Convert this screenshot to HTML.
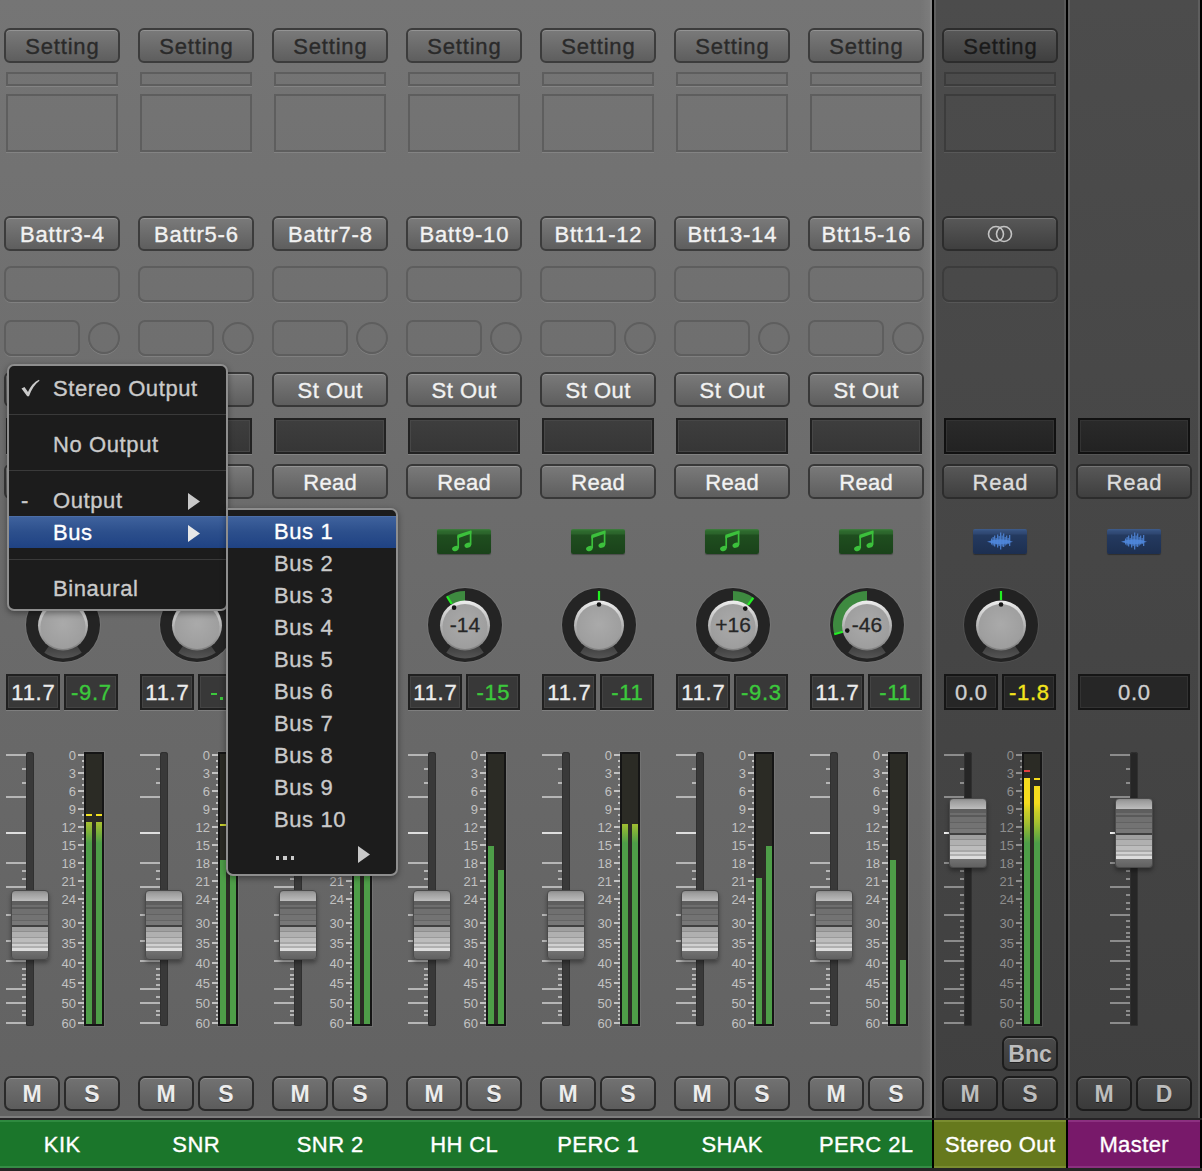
<!DOCTYPE html><html><head><meta charset="utf-8"><style>
*{margin:0;padding:0;box-sizing:border-box}
html,body{width:1202px;height:1171px;overflow:hidden;background:#737373;font-family:"Liberation Sans",sans-serif}
.btn,.vbox,.name,.mt{-webkit-text-stroke:0.35px currentColor}
.a{position:absolute}
.btn{position:absolute;border:2px solid #3c3c3c;border-radius:6px;background:linear-gradient(#7a7a7a,#5e5e5e);box-shadow:inset 0 1px 0 rgba(255,255,255,.2);text-align:center;font-size:22px;color:#f2f2f2;line-height:33px;letter-spacing:0.8px;text-indent:0.8px}
.btn.dk{color:#2a2a2a}
.btn2{border-color:#2c2c2c;background:linear-gradient(#585858,#3f3f3f);box-shadow:inset 0 1px 0 rgba(255,255,255,.18)}
.slot{position:absolute;border:2px solid #5e5e5e;box-shadow:0 1px 0 rgba(255,255,255,.12)}
.rbox{position:absolute;border:2px solid #5e5e5e;border-radius:7px;box-shadow:0 1px 0 rgba(255,255,255,.12)}
.dbox{position:absolute;border:2px solid #222;background:linear-gradient(#3e3e3e,#363636);box-shadow:inset 0 0 0 1px #474747,0 1px 0 rgba(255,255,255,.15)}
.vbox{position:absolute;border:2px solid #202020;background:#383838;box-shadow:inset 0 0 0 1px #444,0 1px 0 rgba(255,255,255,.15);text-align:center;font-size:22px;line-height:34px;color:#ececec;letter-spacing:0.7px;text-indent:0.7px}
.tick{position:absolute;height:2px;background:#b6b6b6}
.lbl{position:absolute;font-size:13px;color:#c2c2c2;text-align:right;width:24px;line-height:13px}
.dash{position:absolute;height:2px;background:#c2c2c2}
.dot{position:absolute;width:2px;height:2px;background:#c2c2c2}
.ms{position:absolute;border:2px solid #2a2a2a;border-radius:7px;background:linear-gradient(#727272,#5c5c5c);box-shadow:inset 0 1px 0 rgba(255,255,255,.2);text-align:center;font-size:23px;font-weight:bold;line-height:33px;color:#ececec;text-shadow:0 1px 0 rgba(0,0,0,.45)}
.name{position:absolute;top:1120px;height:48px;text-align:center;font-size:22px;line-height:50px;color:#fff;letter-spacing:0.4px;text-indent:0.4px}
.cap{position:absolute;width:38px;height:70px;border-radius:4px;border:1px solid #4a4a4a;box-shadow:0 3px 4px rgba(0,0,0,.35);
background:linear-gradient(180deg,#8a8a8a 0,#9c9c9c 2px,#bdbdbd 10px,#5e5e5e 10.5px,#5e5e5e 14px,#6e6e6e 14px,#6e6e6e 16px,#5a5a5a 16px,#5a5a5a 18px,#707070 18px,#707070 23px,#626262 23px,#626262 24.5px,#737373 24.5px,#737373 29px,#666 29px,#666 30.5px,#787878 30.5px,#787878 34.5px,#404040 34.5px,#404040 36px,#a0a0a0 36px,#a0a0a0 40px,#8e8e8e 40px,#8e8e8e 41.5px,#b0b0b0 41.5px,#b0b0b0 46px,#9a9a9a 46px,#9a9a9a 47.5px,#bcbcbc 47.5px,#bcbcbc 51.5px,#a8a8a8 51.5px,#a8a8a8 53.5px,#d0d0d0 53.5px,#d0d0d0 55.5px,#b0b0b0 55.5px,#b0b0b0 57px,#dcdcdc 57px,#dcdcdc 60px,#727272 60px,#5c5c5c 70px)}
.track{position:absolute;width:8px;border-radius:3px 3px 2px 2px;background:#393939;box-shadow:inset 0 0 0 1px #303030}
.meter{position:absolute;width:20px;background:#2b2b25;border:2px solid #151515;box-shadow:0 0 0 1px rgba(255,255,255,.08)}
.bar{position:absolute;width:6px;background:linear-gradient(180deg,#f6dc1e 0,#f6dc1e 49px,#c8cc28 58px,#a8c030 68px,#7cb03a 78px,#4e9e48 89px,#4e9e48 100%)}
</style></head><body><div class="a" style="left:0;top:0;width:932px;height:1171px;background:linear-gradient(#757575 0,#6b6b6b 570px,#626262 1116px)"></div>
<div class="a" style="left:920px;top:0;width:10px;height:1116px;background:linear-gradient(90deg,rgba(255,255,255,0),rgba(255,255,255,.05))"></div>
<div class="a" style="left:932px;top:0;width:136px;height:1171px;background:linear-gradient(#4c4c4c,#404040 1116px)"></div>
<div class="a" style="left:1068px;top:0;width:134px;height:1171px;background:linear-gradient(#4c4c4c,#404040 1116px)"></div>
<div class="a" style="left:930px;top:0;width:2px;height:1171px;background:rgba(255,255,255,.13)"></div>
<div class="a" style="left:932px;top:0;width:2px;height:1171px;background:#000"></div>
<div class="a" style="left:934px;top:0;width:2px;height:1171px;background:rgba(255,255,255,.11)"></div>
<div class="a" style="left:1064px;top:0;width:2px;height:1171px;background:rgba(255,255,255,.07)"></div>
<div class="a" style="left:1066px;top:0;width:2px;height:1171px;background:#000"></div>
<div class="a" style="left:1068px;top:0;width:2px;height:1171px;background:rgba(255,255,255,.11)"></div>
<div class="a" style="left:1198px;top:0;width:2px;height:1171px;background:rgba(255,255,255,.1)"></div>
<div class="a" style="left:1200px;top:0;width:2px;height:1171px;background:#000"></div>
<div class="btn dk" style="left:4px;top:28px;width:116px;height:35px;">Setting</div>
<div class="slot" style="left:6px;top:72px;width:112px;height:14px"></div>
<div class="slot" style="left:6px;top:94px;width:112px;height:58px"></div>
<div class="btn" style="left:4px;top:216px;width:116px;height:35px;">Battr3-4</div>
<div class="rbox" style="left:4px;top:266px;width:116px;height:36px"></div>
<div class="rbox" style="left:4px;top:320px;width:76px;height:36px"></div>
<div class="rbox" style="left:88px;top:322px;width:32px;height:32px;border-radius:50%"></div>
<div class="btn" style="left:4px;top:372px;width:116px;height:35px;border-color:#383838;letter-spacing:0.5px;text-indent:0.5px"></div>
<div class="dbox" style="left:6px;top:418px;width:112px;height:36px"></div>
<div class="btn" style="left:4px;top:464px;width:116px;height:35px;border-color:#383838;letter-spacing:0.3px;text-indent:0.3px"></div>
<div class="a" style="left:35px;top:529px;width:54px;height:25px;background:linear-gradient(#3e7e3e 0,#2e6a2e 2px,#2a622a 5px,#1f4e1f 6px,#1a421a 100%);border-radius:2px;box-shadow:0 1px 1px rgba(0,0,0,.3)"></div>
<svg class="a" style="left:35px;top:529px" width="54" height="25" viewBox="0 0 54 25"><path d="M21.2,6.8 L21.2,19" stroke="#3cc03c" stroke-width="1.7"/><path d="M33.6,2 L33.6,15.8" stroke="#3cc03c" stroke-width="1.7"/><path d="M20.4,5.8 L34.4,1.2 L34.4,4.6 L20.4,9.4 Z" fill="#3cc03c"/><ellipse cx="18.4" cy="19.6" rx="3.4" ry="2.5" transform="rotate(-22 18.4 19.6)" fill="#3cc03c"/><ellipse cx="30.8" cy="16.2" rx="3.4" ry="2.5" transform="rotate(-22 30.8 16.2)" fill="#3cc03c"/></svg>
<svg class="a" style="left:23px;top:585px" width="80" height="80" viewBox="0 0 80 80"><defs><linearGradient id="kf" x1="0" y1="0" x2="0" y2="1"><stop offset="0" stop-color="#eeeeee"/><stop offset="0.5" stop-color="#b4b4b4"/><stop offset="1" stop-color="#7c7c7c"/></linearGradient><radialGradient id="ki" cx="0.5" cy="0.45" r="0.6"><stop offset="0" stop-color="#aaaaaa"/><stop offset="1" stop-color="#9c9c9c"/></radialGradient><linearGradient id="kw" x1="0" y1="0" x2="0" y2="1"><stop offset="0" stop-color="#3c3c3c"/><stop offset="1" stop-color="#555"/></linearGradient></defs><circle cx="40" cy="40" r="38" fill="rgba(255,255,255,0.07)"/><circle cx="40" cy="40" r="37" fill="#242424"/><path d="M58.73,67.77 A33.5,33.5 0 0 1 21.27,67.77 L26.58,59.90 A24,24 0 0 0 53.42,59.90 Z" fill="url(#kw)"/><line x1="40.00" y1="15.00" x2="40.00" y2="6.00" stroke="#22ee22" stroke-width="2.2"/><circle cx="40" cy="40.5" r="25" fill="url(#kf)"/><circle cx="40" cy="41.5" r="22.5" fill="url(#ki)"/><circle cx="40.00" cy="19.50" r="2.3" fill="#151515"/></svg>
<div class="vbox" style="left:6px;top:674px;width:54px;height:36px">11.7</div>
<div class="vbox" style="left:64px;top:674px;width:54px;height:36px;color:#3cc83c">-9.7</div>
<div class="track" style="left:26px;top:752px;height:274px;background:#393939"></div>
<div class="tick" style="left:6px;top:754px;width:20px;background:#b6b6b6"></div>
<div class="tick" style="left:6px;top:796px;width:20px;background:#b6b6b6"></div>
<div class="tick" style="left:6px;top:832px;width:20px;background:#dedede"></div>
<div class="tick" style="left:6px;top:862px;width:20px;background:#b6b6b6"></div>
<div class="tick" style="left:6px;top:886px;width:20px;background:#b6b6b6"></div>
<div class="tick" style="left:6px;top:914px;width:20px;background:#b6b6b6"></div>
<div class="tick" style="left:6px;top:940px;width:20px;background:#b6b6b6"></div>
<div class="tick" style="left:6px;top:960px;width:20px;background:#b6b6b6"></div>
<div class="tick" style="left:6px;top:988px;width:20px;background:#b6b6b6"></div>
<div class="tick" style="left:6px;top:1002px;width:20px;background:#b6b6b6"></div>
<div class="tick" style="left:6px;top:1022px;width:20px;background:#b6b6b6"></div>
<div class="tick" style="left:22px;top:768px;width:4px;background:#b6b6b6"></div>
<div class="tick" style="left:22px;top:782px;width:4px;background:#b6b6b6"></div>
<div class="tick" style="left:22px;top:870px;width:4px;background:#b6b6b6"></div>
<div class="tick" style="left:22px;top:878px;width:4px;background:#b6b6b6"></div>
<div class="tick" style="left:22px;top:894px;width:4px;background:#b6b6b6"></div>
<div class="tick" style="left:22px;top:902px;width:4px;background:#b6b6b6"></div>
<div class="tick" style="left:22px;top:908px;width:4px;background:#b6b6b6"></div>
<div class="tick" style="left:22px;top:920px;width:4px;background:#b6b6b6"></div>
<div class="tick" style="left:22px;top:926px;width:4px;background:#b6b6b6"></div>
<div class="tick" style="left:22px;top:932px;width:4px;background:#b6b6b6"></div>
<div class="tick" style="left:22px;top:936px;width:4px;background:#b6b6b6"></div>
<div class="tick" style="left:22px;top:946px;width:4px;background:#b6b6b6"></div>
<div class="tick" style="left:22px;top:950px;width:4px;background:#b6b6b6"></div>
<div class="tick" style="left:22px;top:954px;width:4px;background:#b6b6b6"></div>
<div class="tick" style="left:22px;top:968px;width:4px;background:#b6b6b6"></div>
<div class="tick" style="left:22px;top:974px;width:4px;background:#b6b6b6"></div>
<div class="tick" style="left:22px;top:978px;width:4px;background:#b6b6b6"></div>
<div class="tick" style="left:22px;top:984px;width:4px;background:#b6b6b6"></div>
<div class="tick" style="left:22px;top:996px;width:4px;background:#b6b6b6"></div>
<div class="tick" style="left:22px;top:1010px;width:4px;background:#b6b6b6"></div>
<div class="tick" style="left:22px;top:1014px;width:4px;background:#b6b6b6"></div>
<div class="cap" style="left:11px;top:890px"></div>
<div class="lbl" style="left:52px;top:748.5px;color:#c2c2c2">0</div>
<div class="dash" style="left:78px;top:754px;width:6px;background:#c2c2c2"></div>
<div class="lbl" style="left:52px;top:766.5px;color:#c2c2c2">3</div>
<div class="dash" style="left:78px;top:772px;width:6px;background:#c2c2c2"></div>
<div class="lbl" style="left:52px;top:784.5px;color:#c2c2c2">6</div>
<div class="dash" style="left:78px;top:790px;width:6px;background:#c2c2c2"></div>
<div class="lbl" style="left:52px;top:802.5px;color:#c2c2c2">9</div>
<div class="dash" style="left:78px;top:808px;width:6px;background:#c2c2c2"></div>
<div class="lbl" style="left:52px;top:820.5px;color:#c2c2c2">12</div>
<div class="dash" style="left:78px;top:826px;width:6px;background:#c2c2c2"></div>
<div class="lbl" style="left:52px;top:838.5px;color:#c2c2c2">15</div>
<div class="dash" style="left:78px;top:844px;width:6px;background:#c2c2c2"></div>
<div class="lbl" style="left:52px;top:856.5px;color:#c2c2c2">18</div>
<div class="dash" style="left:78px;top:862px;width:6px;background:#c2c2c2"></div>
<div class="lbl" style="left:52px;top:874.5px;color:#c2c2c2">21</div>
<div class="dash" style="left:78px;top:880px;width:6px;background:#c2c2c2"></div>
<div class="lbl" style="left:52px;top:892.5px;color:#c2c2c2">24</div>
<div class="dash" style="left:78px;top:898px;width:6px;background:#c2c2c2"></div>
<div class="lbl" style="left:52px;top:916.5px;color:#c2c2c2">30</div>
<div class="dash" style="left:78px;top:922px;width:6px;background:#c2c2c2"></div>
<div class="lbl" style="left:52px;top:936.5px;color:#c2c2c2">35</div>
<div class="dash" style="left:78px;top:942px;width:6px;background:#c2c2c2"></div>
<div class="lbl" style="left:52px;top:956.5px;color:#c2c2c2">40</div>
<div class="dash" style="left:78px;top:962px;width:6px;background:#c2c2c2"></div>
<div class="lbl" style="left:52px;top:976.5px;color:#c2c2c2">45</div>
<div class="dash" style="left:78px;top:982px;width:6px;background:#c2c2c2"></div>
<div class="lbl" style="left:52px;top:996.5px;color:#c2c2c2">50</div>
<div class="dash" style="left:78px;top:1002px;width:6px;background:#c2c2c2"></div>
<div class="lbl" style="left:52px;top:1016.5px;color:#c2c2c2">60</div>
<div class="dash" style="left:78px;top:1022px;width:6px;background:#c2c2c2"></div>
<div class="dot" style="left:82px;top:760px;background:#c2c2c2"></div>
<div class="dot" style="left:82px;top:766px;background:#c2c2c2"></div>
<div class="dot" style="left:82px;top:778px;background:#c2c2c2"></div>
<div class="dot" style="left:82px;top:784px;background:#c2c2c2"></div>
<div class="dot" style="left:82px;top:796px;background:#c2c2c2"></div>
<div class="dot" style="left:82px;top:802px;background:#c2c2c2"></div>
<div class="dot" style="left:82px;top:814px;background:#c2c2c2"></div>
<div class="dot" style="left:82px;top:820px;background:#c2c2c2"></div>
<div class="dot" style="left:82px;top:832px;background:#c2c2c2"></div>
<div class="dot" style="left:82px;top:838px;background:#c2c2c2"></div>
<div class="dot" style="left:82px;top:850px;background:#c2c2c2"></div>
<div class="dot" style="left:82px;top:856px;background:#c2c2c2"></div>
<div class="dot" style="left:82px;top:868px;background:#c2c2c2"></div>
<div class="dot" style="left:82px;top:874px;background:#c2c2c2"></div>
<div class="dot" style="left:82px;top:886px;background:#c2c2c2"></div>
<div class="dot" style="left:82px;top:892px;background:#c2c2c2"></div>
<div class="dot" style="left:82px;top:902px;background:#c2c2c2"></div>
<div class="dot" style="left:82px;top:906px;background:#c2c2c2"></div>
<div class="dot" style="left:82px;top:910px;background:#c2c2c2"></div>
<div class="dot" style="left:82px;top:914px;background:#c2c2c2"></div>
<div class="dot" style="left:82px;top:918px;background:#c2c2c2"></div>
<div class="dot" style="left:82px;top:926px;background:#c2c2c2"></div>
<div class="dot" style="left:82px;top:930px;background:#c2c2c2"></div>
<div class="dot" style="left:82px;top:934px;background:#c2c2c2"></div>
<div class="dot" style="left:82px;top:938px;background:#c2c2c2"></div>
<div class="dot" style="left:82px;top:946px;background:#c2c2c2"></div>
<div class="dot" style="left:82px;top:950px;background:#c2c2c2"></div>
<div class="dot" style="left:82px;top:954px;background:#c2c2c2"></div>
<div class="dot" style="left:82px;top:958px;background:#c2c2c2"></div>
<div class="dot" style="left:82px;top:966px;background:#c2c2c2"></div>
<div class="dot" style="left:82px;top:970px;background:#c2c2c2"></div>
<div class="dot" style="left:82px;top:974px;background:#c2c2c2"></div>
<div class="dot" style="left:82px;top:978px;background:#c2c2c2"></div>
<div class="dot" style="left:82px;top:986px;background:#c2c2c2"></div>
<div class="dot" style="left:82px;top:990px;background:#c2c2c2"></div>
<div class="dot" style="left:82px;top:994px;background:#c2c2c2"></div>
<div class="dot" style="left:82px;top:998px;background:#c2c2c2"></div>
<div class="dot" style="left:82px;top:1006px;background:#c2c2c2"></div>
<div class="dot" style="left:82px;top:1010px;background:#c2c2c2"></div>
<div class="dot" style="left:82px;top:1014px;background:#c2c2c2"></div>
<div class="dot" style="left:82px;top:1018px;background:#c2c2c2"></div>
<div class="meter" style="left:84px;top:752px;height:274px">
<div class="bar" style="left:0px;top:68px;height:202px;background-position:0 -68px;background-size:6px 270px"></div>
<div class="a" style="left:0px;top:60px;width:6px;height:2px;background:#f0e020"></div>
<div class="bar" style="left:10px;top:68px;height:202px;background-position:0 -68px;background-size:6px 270px"></div>
<div class="a" style="left:10px;top:60px;width:6px;height:2px;background:#f0e020"></div>
</div>
<div class="ms" style="left:4px;top:1076px;width:56px;height:35px;">M</div>
<div class="ms" style="left:64px;top:1076px;width:56px;height:35px;">S</div>
<div class="btn dk" style="left:138px;top:28px;width:116px;height:35px;">Setting</div>
<div class="slot" style="left:140px;top:72px;width:112px;height:14px"></div>
<div class="slot" style="left:140px;top:94px;width:112px;height:58px"></div>
<div class="btn" style="left:138px;top:216px;width:116px;height:35px;">Battr5-6</div>
<div class="rbox" style="left:138px;top:266px;width:116px;height:36px"></div>
<div class="rbox" style="left:138px;top:320px;width:76px;height:36px"></div>
<div class="rbox" style="left:222px;top:322px;width:32px;height:32px;border-radius:50%"></div>
<div class="btn" style="left:138px;top:372px;width:116px;height:35px;border-color:#383838;letter-spacing:0.5px;text-indent:0.5px"></div>
<div class="dbox" style="left:140px;top:418px;width:112px;height:36px"></div>
<div class="btn" style="left:138px;top:464px;width:116px;height:35px;border-color:#383838;letter-spacing:0.3px;text-indent:0.3px"></div>
<div class="a" style="left:169px;top:529px;width:54px;height:25px;background:linear-gradient(#3e7e3e 0,#2e6a2e 2px,#2a622a 5px,#1f4e1f 6px,#1a421a 100%);border-radius:2px;box-shadow:0 1px 1px rgba(0,0,0,.3)"></div>
<svg class="a" style="left:169px;top:529px" width="54" height="25" viewBox="0 0 54 25"><path d="M21.2,6.8 L21.2,19" stroke="#3cc03c" stroke-width="1.7"/><path d="M33.6,2 L33.6,15.8" stroke="#3cc03c" stroke-width="1.7"/><path d="M20.4,5.8 L34.4,1.2 L34.4,4.6 L20.4,9.4 Z" fill="#3cc03c"/><ellipse cx="18.4" cy="19.6" rx="3.4" ry="2.5" transform="rotate(-22 18.4 19.6)" fill="#3cc03c"/><ellipse cx="30.8" cy="16.2" rx="3.4" ry="2.5" transform="rotate(-22 30.8 16.2)" fill="#3cc03c"/></svg>
<svg class="a" style="left:157px;top:585px" width="80" height="80" viewBox="0 0 80 80"><defs><linearGradient id="kf" x1="0" y1="0" x2="0" y2="1"><stop offset="0" stop-color="#eeeeee"/><stop offset="0.5" stop-color="#b4b4b4"/><stop offset="1" stop-color="#7c7c7c"/></linearGradient><radialGradient id="ki" cx="0.5" cy="0.45" r="0.6"><stop offset="0" stop-color="#aaaaaa"/><stop offset="1" stop-color="#9c9c9c"/></radialGradient><linearGradient id="kw" x1="0" y1="0" x2="0" y2="1"><stop offset="0" stop-color="#3c3c3c"/><stop offset="1" stop-color="#555"/></linearGradient></defs><circle cx="40" cy="40" r="38" fill="rgba(255,255,255,0.07)"/><circle cx="40" cy="40" r="37" fill="#242424"/><path d="M58.73,67.77 A33.5,33.5 0 0 1 21.27,67.77 L26.58,59.90 A24,24 0 0 0 53.42,59.90 Z" fill="url(#kw)"/><line x1="40.00" y1="15.00" x2="40.00" y2="6.00" stroke="#22ee22" stroke-width="2.2"/><circle cx="40" cy="40.5" r="25" fill="url(#kf)"/><circle cx="40" cy="41.5" r="22.5" fill="url(#ki)"/><circle cx="40.00" cy="19.50" r="2.3" fill="#151515"/></svg>
<div class="vbox" style="left:140px;top:674px;width:54px;height:36px">11.7</div>
<div class="vbox" style="left:198px;top:674px;width:54px;height:36px;color:#3cc83c"></div>
<div class="a" style="left:210.5px;top:693px;width:6.5px;height:2.2px;background:#3cc83c"></div><div class="a" style="left:220px;top:697px;width:3.2px;height:3px;background:#3cc83c"></div>
<div class="track" style="left:160px;top:752px;height:274px;background:#393939"></div>
<div class="tick" style="left:140px;top:754px;width:20px;background:#b6b6b6"></div>
<div class="tick" style="left:140px;top:796px;width:20px;background:#b6b6b6"></div>
<div class="tick" style="left:140px;top:832px;width:20px;background:#dedede"></div>
<div class="tick" style="left:140px;top:862px;width:20px;background:#b6b6b6"></div>
<div class="tick" style="left:140px;top:886px;width:20px;background:#b6b6b6"></div>
<div class="tick" style="left:140px;top:914px;width:20px;background:#b6b6b6"></div>
<div class="tick" style="left:140px;top:940px;width:20px;background:#b6b6b6"></div>
<div class="tick" style="left:140px;top:960px;width:20px;background:#b6b6b6"></div>
<div class="tick" style="left:140px;top:988px;width:20px;background:#b6b6b6"></div>
<div class="tick" style="left:140px;top:1002px;width:20px;background:#b6b6b6"></div>
<div class="tick" style="left:140px;top:1022px;width:20px;background:#b6b6b6"></div>
<div class="tick" style="left:156px;top:768px;width:4px;background:#b6b6b6"></div>
<div class="tick" style="left:156px;top:782px;width:4px;background:#b6b6b6"></div>
<div class="tick" style="left:156px;top:870px;width:4px;background:#b6b6b6"></div>
<div class="tick" style="left:156px;top:878px;width:4px;background:#b6b6b6"></div>
<div class="tick" style="left:156px;top:894px;width:4px;background:#b6b6b6"></div>
<div class="tick" style="left:156px;top:902px;width:4px;background:#b6b6b6"></div>
<div class="tick" style="left:156px;top:908px;width:4px;background:#b6b6b6"></div>
<div class="tick" style="left:156px;top:920px;width:4px;background:#b6b6b6"></div>
<div class="tick" style="left:156px;top:926px;width:4px;background:#b6b6b6"></div>
<div class="tick" style="left:156px;top:932px;width:4px;background:#b6b6b6"></div>
<div class="tick" style="left:156px;top:936px;width:4px;background:#b6b6b6"></div>
<div class="tick" style="left:156px;top:946px;width:4px;background:#b6b6b6"></div>
<div class="tick" style="left:156px;top:950px;width:4px;background:#b6b6b6"></div>
<div class="tick" style="left:156px;top:954px;width:4px;background:#b6b6b6"></div>
<div class="tick" style="left:156px;top:968px;width:4px;background:#b6b6b6"></div>
<div class="tick" style="left:156px;top:974px;width:4px;background:#b6b6b6"></div>
<div class="tick" style="left:156px;top:978px;width:4px;background:#b6b6b6"></div>
<div class="tick" style="left:156px;top:984px;width:4px;background:#b6b6b6"></div>
<div class="tick" style="left:156px;top:996px;width:4px;background:#b6b6b6"></div>
<div class="tick" style="left:156px;top:1010px;width:4px;background:#b6b6b6"></div>
<div class="tick" style="left:156px;top:1014px;width:4px;background:#b6b6b6"></div>
<div class="cap" style="left:145px;top:890px"></div>
<div class="lbl" style="left:186px;top:748.5px;color:#c2c2c2">0</div>
<div class="dash" style="left:212px;top:754px;width:6px;background:#c2c2c2"></div>
<div class="lbl" style="left:186px;top:766.5px;color:#c2c2c2">3</div>
<div class="dash" style="left:212px;top:772px;width:6px;background:#c2c2c2"></div>
<div class="lbl" style="left:186px;top:784.5px;color:#c2c2c2">6</div>
<div class="dash" style="left:212px;top:790px;width:6px;background:#c2c2c2"></div>
<div class="lbl" style="left:186px;top:802.5px;color:#c2c2c2">9</div>
<div class="dash" style="left:212px;top:808px;width:6px;background:#c2c2c2"></div>
<div class="lbl" style="left:186px;top:820.5px;color:#c2c2c2">12</div>
<div class="dash" style="left:212px;top:826px;width:6px;background:#c2c2c2"></div>
<div class="lbl" style="left:186px;top:838.5px;color:#c2c2c2">15</div>
<div class="dash" style="left:212px;top:844px;width:6px;background:#c2c2c2"></div>
<div class="lbl" style="left:186px;top:856.5px;color:#c2c2c2">18</div>
<div class="dash" style="left:212px;top:862px;width:6px;background:#c2c2c2"></div>
<div class="lbl" style="left:186px;top:874.5px;color:#c2c2c2">21</div>
<div class="dash" style="left:212px;top:880px;width:6px;background:#c2c2c2"></div>
<div class="lbl" style="left:186px;top:892.5px;color:#c2c2c2">24</div>
<div class="dash" style="left:212px;top:898px;width:6px;background:#c2c2c2"></div>
<div class="lbl" style="left:186px;top:916.5px;color:#c2c2c2">30</div>
<div class="dash" style="left:212px;top:922px;width:6px;background:#c2c2c2"></div>
<div class="lbl" style="left:186px;top:936.5px;color:#c2c2c2">35</div>
<div class="dash" style="left:212px;top:942px;width:6px;background:#c2c2c2"></div>
<div class="lbl" style="left:186px;top:956.5px;color:#c2c2c2">40</div>
<div class="dash" style="left:212px;top:962px;width:6px;background:#c2c2c2"></div>
<div class="lbl" style="left:186px;top:976.5px;color:#c2c2c2">45</div>
<div class="dash" style="left:212px;top:982px;width:6px;background:#c2c2c2"></div>
<div class="lbl" style="left:186px;top:996.5px;color:#c2c2c2">50</div>
<div class="dash" style="left:212px;top:1002px;width:6px;background:#c2c2c2"></div>
<div class="lbl" style="left:186px;top:1016.5px;color:#c2c2c2">60</div>
<div class="dash" style="left:212px;top:1022px;width:6px;background:#c2c2c2"></div>
<div class="dot" style="left:216px;top:760px;background:#c2c2c2"></div>
<div class="dot" style="left:216px;top:766px;background:#c2c2c2"></div>
<div class="dot" style="left:216px;top:778px;background:#c2c2c2"></div>
<div class="dot" style="left:216px;top:784px;background:#c2c2c2"></div>
<div class="dot" style="left:216px;top:796px;background:#c2c2c2"></div>
<div class="dot" style="left:216px;top:802px;background:#c2c2c2"></div>
<div class="dot" style="left:216px;top:814px;background:#c2c2c2"></div>
<div class="dot" style="left:216px;top:820px;background:#c2c2c2"></div>
<div class="dot" style="left:216px;top:832px;background:#c2c2c2"></div>
<div class="dot" style="left:216px;top:838px;background:#c2c2c2"></div>
<div class="dot" style="left:216px;top:850px;background:#c2c2c2"></div>
<div class="dot" style="left:216px;top:856px;background:#c2c2c2"></div>
<div class="dot" style="left:216px;top:868px;background:#c2c2c2"></div>
<div class="dot" style="left:216px;top:874px;background:#c2c2c2"></div>
<div class="dot" style="left:216px;top:886px;background:#c2c2c2"></div>
<div class="dot" style="left:216px;top:892px;background:#c2c2c2"></div>
<div class="dot" style="left:216px;top:902px;background:#c2c2c2"></div>
<div class="dot" style="left:216px;top:906px;background:#c2c2c2"></div>
<div class="dot" style="left:216px;top:910px;background:#c2c2c2"></div>
<div class="dot" style="left:216px;top:914px;background:#c2c2c2"></div>
<div class="dot" style="left:216px;top:918px;background:#c2c2c2"></div>
<div class="dot" style="left:216px;top:926px;background:#c2c2c2"></div>
<div class="dot" style="left:216px;top:930px;background:#c2c2c2"></div>
<div class="dot" style="left:216px;top:934px;background:#c2c2c2"></div>
<div class="dot" style="left:216px;top:938px;background:#c2c2c2"></div>
<div class="dot" style="left:216px;top:946px;background:#c2c2c2"></div>
<div class="dot" style="left:216px;top:950px;background:#c2c2c2"></div>
<div class="dot" style="left:216px;top:954px;background:#c2c2c2"></div>
<div class="dot" style="left:216px;top:958px;background:#c2c2c2"></div>
<div class="dot" style="left:216px;top:966px;background:#c2c2c2"></div>
<div class="dot" style="left:216px;top:970px;background:#c2c2c2"></div>
<div class="dot" style="left:216px;top:974px;background:#c2c2c2"></div>
<div class="dot" style="left:216px;top:978px;background:#c2c2c2"></div>
<div class="dot" style="left:216px;top:986px;background:#c2c2c2"></div>
<div class="dot" style="left:216px;top:990px;background:#c2c2c2"></div>
<div class="dot" style="left:216px;top:994px;background:#c2c2c2"></div>
<div class="dot" style="left:216px;top:998px;background:#c2c2c2"></div>
<div class="dot" style="left:216px;top:1006px;background:#c2c2c2"></div>
<div class="dot" style="left:216px;top:1010px;background:#c2c2c2"></div>
<div class="dot" style="left:216px;top:1014px;background:#c2c2c2"></div>
<div class="dot" style="left:216px;top:1018px;background:#c2c2c2"></div>
<div class="meter" style="left:218px;top:752px;height:274px">
<div class="bar" style="left:0px;top:106px;height:164px;background-position:0 -106px;background-size:6px 270px"></div>
<div class="a" style="left:0px;top:70px;width:6px;height:2px;background:#c8d030"></div>
<div class="bar" style="left:10px;top:106px;height:164px;background-position:0 -106px;background-size:6px 270px"></div>
</div>
<div class="ms" style="left:138px;top:1076px;width:56px;height:35px;">M</div>
<div class="ms" style="left:198px;top:1076px;width:56px;height:35px;">S</div>
<div class="btn dk" style="left:272px;top:28px;width:116px;height:35px;">Setting</div>
<div class="slot" style="left:274px;top:72px;width:112px;height:14px"></div>
<div class="slot" style="left:274px;top:94px;width:112px;height:58px"></div>
<div class="btn" style="left:272px;top:216px;width:116px;height:35px;">Battr7-8</div>
<div class="rbox" style="left:272px;top:266px;width:116px;height:36px"></div>
<div class="rbox" style="left:272px;top:320px;width:76px;height:36px"></div>
<div class="rbox" style="left:356px;top:322px;width:32px;height:32px;border-radius:50%"></div>
<div class="btn" style="left:272px;top:372px;width:116px;height:35px;border-color:#383838;letter-spacing:0.5px;text-indent:0.5px">St Out</div>
<div class="dbox" style="left:274px;top:418px;width:112px;height:36px"></div>
<div class="btn" style="left:272px;top:464px;width:116px;height:35px;border-color:#383838;letter-spacing:0.3px;text-indent:0.3px">Read</div>
<div class="a" style="left:303px;top:529px;width:54px;height:25px;background:linear-gradient(#3e7e3e 0,#2e6a2e 2px,#2a622a 5px,#1f4e1f 6px,#1a421a 100%);border-radius:2px;box-shadow:0 1px 1px rgba(0,0,0,.3)"></div>
<svg class="a" style="left:303px;top:529px" width="54" height="25" viewBox="0 0 54 25"><path d="M21.2,6.8 L21.2,19" stroke="#3cc03c" stroke-width="1.7"/><path d="M33.6,2 L33.6,15.8" stroke="#3cc03c" stroke-width="1.7"/><path d="M20.4,5.8 L34.4,1.2 L34.4,4.6 L20.4,9.4 Z" fill="#3cc03c"/><ellipse cx="18.4" cy="19.6" rx="3.4" ry="2.5" transform="rotate(-22 18.4 19.6)" fill="#3cc03c"/><ellipse cx="30.8" cy="16.2" rx="3.4" ry="2.5" transform="rotate(-22 30.8 16.2)" fill="#3cc03c"/></svg>
<svg class="a" style="left:291px;top:585px" width="80" height="80" viewBox="0 0 80 80"><defs><linearGradient id="kf" x1="0" y1="0" x2="0" y2="1"><stop offset="0" stop-color="#eeeeee"/><stop offset="0.5" stop-color="#b4b4b4"/><stop offset="1" stop-color="#7c7c7c"/></linearGradient><radialGradient id="ki" cx="0.5" cy="0.45" r="0.6"><stop offset="0" stop-color="#aaaaaa"/><stop offset="1" stop-color="#9c9c9c"/></radialGradient><linearGradient id="kw" x1="0" y1="0" x2="0" y2="1"><stop offset="0" stop-color="#3c3c3c"/><stop offset="1" stop-color="#555"/></linearGradient></defs><circle cx="40" cy="40" r="38" fill="rgba(255,255,255,0.07)"/><circle cx="40" cy="40" r="37" fill="#242424"/><path d="M58.73,67.77 A33.5,33.5 0 0 1 21.27,67.77 L26.58,59.90 A24,24 0 0 0 53.42,59.90 Z" fill="url(#kw)"/><line x1="40.00" y1="15.00" x2="40.00" y2="6.00" stroke="#22ee22" stroke-width="2.2"/><circle cx="40" cy="40.5" r="25" fill="url(#kf)"/><circle cx="40" cy="41.5" r="22.5" fill="url(#ki)"/><circle cx="40.00" cy="19.50" r="2.3" fill="#151515"/></svg>
<div class="vbox" style="left:274px;top:674px;width:54px;height:36px">11.7</div>
<div class="vbox" style="left:332px;top:674px;width:54px;height:36px;color:#3cc83c">-11</div>
<div class="track" style="left:294px;top:752px;height:274px;background:#393939"></div>
<div class="tick" style="left:274px;top:754px;width:20px;background:#b6b6b6"></div>
<div class="tick" style="left:274px;top:796px;width:20px;background:#b6b6b6"></div>
<div class="tick" style="left:274px;top:832px;width:20px;background:#dedede"></div>
<div class="tick" style="left:274px;top:862px;width:20px;background:#b6b6b6"></div>
<div class="tick" style="left:274px;top:886px;width:20px;background:#b6b6b6"></div>
<div class="tick" style="left:274px;top:914px;width:20px;background:#b6b6b6"></div>
<div class="tick" style="left:274px;top:940px;width:20px;background:#b6b6b6"></div>
<div class="tick" style="left:274px;top:960px;width:20px;background:#b6b6b6"></div>
<div class="tick" style="left:274px;top:988px;width:20px;background:#b6b6b6"></div>
<div class="tick" style="left:274px;top:1002px;width:20px;background:#b6b6b6"></div>
<div class="tick" style="left:274px;top:1022px;width:20px;background:#b6b6b6"></div>
<div class="tick" style="left:290px;top:768px;width:4px;background:#b6b6b6"></div>
<div class="tick" style="left:290px;top:782px;width:4px;background:#b6b6b6"></div>
<div class="tick" style="left:290px;top:870px;width:4px;background:#b6b6b6"></div>
<div class="tick" style="left:290px;top:878px;width:4px;background:#b6b6b6"></div>
<div class="tick" style="left:290px;top:894px;width:4px;background:#b6b6b6"></div>
<div class="tick" style="left:290px;top:902px;width:4px;background:#b6b6b6"></div>
<div class="tick" style="left:290px;top:908px;width:4px;background:#b6b6b6"></div>
<div class="tick" style="left:290px;top:920px;width:4px;background:#b6b6b6"></div>
<div class="tick" style="left:290px;top:926px;width:4px;background:#b6b6b6"></div>
<div class="tick" style="left:290px;top:932px;width:4px;background:#b6b6b6"></div>
<div class="tick" style="left:290px;top:936px;width:4px;background:#b6b6b6"></div>
<div class="tick" style="left:290px;top:946px;width:4px;background:#b6b6b6"></div>
<div class="tick" style="left:290px;top:950px;width:4px;background:#b6b6b6"></div>
<div class="tick" style="left:290px;top:954px;width:4px;background:#b6b6b6"></div>
<div class="tick" style="left:290px;top:968px;width:4px;background:#b6b6b6"></div>
<div class="tick" style="left:290px;top:974px;width:4px;background:#b6b6b6"></div>
<div class="tick" style="left:290px;top:978px;width:4px;background:#b6b6b6"></div>
<div class="tick" style="left:290px;top:984px;width:4px;background:#b6b6b6"></div>
<div class="tick" style="left:290px;top:996px;width:4px;background:#b6b6b6"></div>
<div class="tick" style="left:290px;top:1010px;width:4px;background:#b6b6b6"></div>
<div class="tick" style="left:290px;top:1014px;width:4px;background:#b6b6b6"></div>
<div class="cap" style="left:279px;top:890px"></div>
<div class="lbl" style="left:320px;top:748.5px;color:#c2c2c2">0</div>
<div class="dash" style="left:346px;top:754px;width:6px;background:#c2c2c2"></div>
<div class="lbl" style="left:320px;top:766.5px;color:#c2c2c2">3</div>
<div class="dash" style="left:346px;top:772px;width:6px;background:#c2c2c2"></div>
<div class="lbl" style="left:320px;top:784.5px;color:#c2c2c2">6</div>
<div class="dash" style="left:346px;top:790px;width:6px;background:#c2c2c2"></div>
<div class="lbl" style="left:320px;top:802.5px;color:#c2c2c2">9</div>
<div class="dash" style="left:346px;top:808px;width:6px;background:#c2c2c2"></div>
<div class="lbl" style="left:320px;top:820.5px;color:#c2c2c2">12</div>
<div class="dash" style="left:346px;top:826px;width:6px;background:#c2c2c2"></div>
<div class="lbl" style="left:320px;top:838.5px;color:#c2c2c2">15</div>
<div class="dash" style="left:346px;top:844px;width:6px;background:#c2c2c2"></div>
<div class="lbl" style="left:320px;top:856.5px;color:#c2c2c2">18</div>
<div class="dash" style="left:346px;top:862px;width:6px;background:#c2c2c2"></div>
<div class="lbl" style="left:320px;top:874.5px;color:#c2c2c2">21</div>
<div class="dash" style="left:346px;top:880px;width:6px;background:#c2c2c2"></div>
<div class="lbl" style="left:320px;top:892.5px;color:#c2c2c2">24</div>
<div class="dash" style="left:346px;top:898px;width:6px;background:#c2c2c2"></div>
<div class="lbl" style="left:320px;top:916.5px;color:#c2c2c2">30</div>
<div class="dash" style="left:346px;top:922px;width:6px;background:#c2c2c2"></div>
<div class="lbl" style="left:320px;top:936.5px;color:#c2c2c2">35</div>
<div class="dash" style="left:346px;top:942px;width:6px;background:#c2c2c2"></div>
<div class="lbl" style="left:320px;top:956.5px;color:#c2c2c2">40</div>
<div class="dash" style="left:346px;top:962px;width:6px;background:#c2c2c2"></div>
<div class="lbl" style="left:320px;top:976.5px;color:#c2c2c2">45</div>
<div class="dash" style="left:346px;top:982px;width:6px;background:#c2c2c2"></div>
<div class="lbl" style="left:320px;top:996.5px;color:#c2c2c2">50</div>
<div class="dash" style="left:346px;top:1002px;width:6px;background:#c2c2c2"></div>
<div class="lbl" style="left:320px;top:1016.5px;color:#c2c2c2">60</div>
<div class="dash" style="left:346px;top:1022px;width:6px;background:#c2c2c2"></div>
<div class="dot" style="left:350px;top:760px;background:#c2c2c2"></div>
<div class="dot" style="left:350px;top:766px;background:#c2c2c2"></div>
<div class="dot" style="left:350px;top:778px;background:#c2c2c2"></div>
<div class="dot" style="left:350px;top:784px;background:#c2c2c2"></div>
<div class="dot" style="left:350px;top:796px;background:#c2c2c2"></div>
<div class="dot" style="left:350px;top:802px;background:#c2c2c2"></div>
<div class="dot" style="left:350px;top:814px;background:#c2c2c2"></div>
<div class="dot" style="left:350px;top:820px;background:#c2c2c2"></div>
<div class="dot" style="left:350px;top:832px;background:#c2c2c2"></div>
<div class="dot" style="left:350px;top:838px;background:#c2c2c2"></div>
<div class="dot" style="left:350px;top:850px;background:#c2c2c2"></div>
<div class="dot" style="left:350px;top:856px;background:#c2c2c2"></div>
<div class="dot" style="left:350px;top:868px;background:#c2c2c2"></div>
<div class="dot" style="left:350px;top:874px;background:#c2c2c2"></div>
<div class="dot" style="left:350px;top:886px;background:#c2c2c2"></div>
<div class="dot" style="left:350px;top:892px;background:#c2c2c2"></div>
<div class="dot" style="left:350px;top:902px;background:#c2c2c2"></div>
<div class="dot" style="left:350px;top:906px;background:#c2c2c2"></div>
<div class="dot" style="left:350px;top:910px;background:#c2c2c2"></div>
<div class="dot" style="left:350px;top:914px;background:#c2c2c2"></div>
<div class="dot" style="left:350px;top:918px;background:#c2c2c2"></div>
<div class="dot" style="left:350px;top:926px;background:#c2c2c2"></div>
<div class="dot" style="left:350px;top:930px;background:#c2c2c2"></div>
<div class="dot" style="left:350px;top:934px;background:#c2c2c2"></div>
<div class="dot" style="left:350px;top:938px;background:#c2c2c2"></div>
<div class="dot" style="left:350px;top:946px;background:#c2c2c2"></div>
<div class="dot" style="left:350px;top:950px;background:#c2c2c2"></div>
<div class="dot" style="left:350px;top:954px;background:#c2c2c2"></div>
<div class="dot" style="left:350px;top:958px;background:#c2c2c2"></div>
<div class="dot" style="left:350px;top:966px;background:#c2c2c2"></div>
<div class="dot" style="left:350px;top:970px;background:#c2c2c2"></div>
<div class="dot" style="left:350px;top:974px;background:#c2c2c2"></div>
<div class="dot" style="left:350px;top:978px;background:#c2c2c2"></div>
<div class="dot" style="left:350px;top:986px;background:#c2c2c2"></div>
<div class="dot" style="left:350px;top:990px;background:#c2c2c2"></div>
<div class="dot" style="left:350px;top:994px;background:#c2c2c2"></div>
<div class="dot" style="left:350px;top:998px;background:#c2c2c2"></div>
<div class="dot" style="left:350px;top:1006px;background:#c2c2c2"></div>
<div class="dot" style="left:350px;top:1010px;background:#c2c2c2"></div>
<div class="dot" style="left:350px;top:1014px;background:#c2c2c2"></div>
<div class="dot" style="left:350px;top:1018px;background:#c2c2c2"></div>
<div class="meter" style="left:352px;top:752px;height:274px">
<div class="bar" style="left:0px;top:106px;height:164px;background-position:0 -106px;background-size:6px 270px"></div>
<div class="bar" style="left:10px;top:106px;height:164px;background-position:0 -106px;background-size:6px 270px"></div>
</div>
<div class="ms" style="left:272px;top:1076px;width:56px;height:35px;">M</div>
<div class="ms" style="left:332px;top:1076px;width:56px;height:35px;">S</div>
<div class="btn dk" style="left:406px;top:28px;width:116px;height:35px;">Setting</div>
<div class="slot" style="left:408px;top:72px;width:112px;height:14px"></div>
<div class="slot" style="left:408px;top:94px;width:112px;height:58px"></div>
<div class="btn" style="left:406px;top:216px;width:116px;height:35px;">Batt9-10</div>
<div class="rbox" style="left:406px;top:266px;width:116px;height:36px"></div>
<div class="rbox" style="left:406px;top:320px;width:76px;height:36px"></div>
<div class="rbox" style="left:490px;top:322px;width:32px;height:32px;border-radius:50%"></div>
<div class="btn" style="left:406px;top:372px;width:116px;height:35px;border-color:#383838;letter-spacing:0.5px;text-indent:0.5px">St Out</div>
<div class="dbox" style="left:408px;top:418px;width:112px;height:36px"></div>
<div class="btn" style="left:406px;top:464px;width:116px;height:35px;border-color:#383838;letter-spacing:0.3px;text-indent:0.3px">Read</div>
<div class="a" style="left:437px;top:529px;width:54px;height:25px;background:linear-gradient(#3e7e3e 0,#2e6a2e 2px,#2a622a 5px,#1f4e1f 6px,#1a421a 100%);border-radius:2px;box-shadow:0 1px 1px rgba(0,0,0,.3)"></div>
<svg class="a" style="left:437px;top:529px" width="54" height="25" viewBox="0 0 54 25"><path d="M21.2,6.8 L21.2,19" stroke="#3cc03c" stroke-width="1.7"/><path d="M33.6,2 L33.6,15.8" stroke="#3cc03c" stroke-width="1.7"/><path d="M20.4,5.8 L34.4,1.2 L34.4,4.6 L20.4,9.4 Z" fill="#3cc03c"/><ellipse cx="18.4" cy="19.6" rx="3.4" ry="2.5" transform="rotate(-22 18.4 19.6)" fill="#3cc03c"/><ellipse cx="30.8" cy="16.2" rx="3.4" ry="2.5" transform="rotate(-22 30.8 16.2)" fill="#3cc03c"/></svg>
<svg class="a" style="left:425px;top:585px" width="80" height="80" viewBox="0 0 80 80"><defs><linearGradient id="kf" x1="0" y1="0" x2="0" y2="1"><stop offset="0" stop-color="#eeeeee"/><stop offset="0.5" stop-color="#b4b4b4"/><stop offset="1" stop-color="#7c7c7c"/></linearGradient><radialGradient id="ki" cx="0.5" cy="0.45" r="0.6"><stop offset="0" stop-color="#aaaaaa"/><stop offset="1" stop-color="#9c9c9c"/></radialGradient><linearGradient id="kw" x1="0" y1="0" x2="0" y2="1"><stop offset="0" stop-color="#3c3c3c"/><stop offset="1" stop-color="#555"/></linearGradient></defs><circle cx="40" cy="40" r="38" fill="rgba(255,255,255,0.07)"/><circle cx="40" cy="40" r="37" fill="#242424"/><path d="M58.73,67.77 A33.5,33.5 0 0 1 21.27,67.77 L26.58,59.90 A24,24 0 0 0 53.42,59.90 Z" fill="url(#kw)"/><path d="M21.88,11.23 A34,34 0 0 1 40.00,6.00 L40.00,16.00 A24,24 0 0 0 27.21,19.69 Z" fill="#3e8a40"/><line x1="26.68" y1="18.85" x2="21.88" y2="11.23" stroke="#22ee22" stroke-width="2.2"/><circle cx="40" cy="40.5" r="25" fill="url(#kf)"/><circle cx="40" cy="41.5" r="22.5" fill="url(#ki)"/><circle cx="29.08" cy="22.65" r="2.3" fill="#151515"/><text x="40" y="47.2" text-anchor="middle" font-family="Liberation Sans" font-size="21" fill="#262626" stroke="#262626" stroke-width="0.3">-14</text></svg>
<div class="vbox" style="left:408px;top:674px;width:54px;height:36px">11.7</div>
<div class="vbox" style="left:466px;top:674px;width:54px;height:36px;color:#3cc83c">-15</div>
<div class="track" style="left:428px;top:752px;height:274px;background:#393939"></div>
<div class="tick" style="left:408px;top:754px;width:20px;background:#b6b6b6"></div>
<div class="tick" style="left:408px;top:796px;width:20px;background:#b6b6b6"></div>
<div class="tick" style="left:408px;top:832px;width:20px;background:#dedede"></div>
<div class="tick" style="left:408px;top:862px;width:20px;background:#b6b6b6"></div>
<div class="tick" style="left:408px;top:886px;width:20px;background:#b6b6b6"></div>
<div class="tick" style="left:408px;top:914px;width:20px;background:#b6b6b6"></div>
<div class="tick" style="left:408px;top:940px;width:20px;background:#b6b6b6"></div>
<div class="tick" style="left:408px;top:960px;width:20px;background:#b6b6b6"></div>
<div class="tick" style="left:408px;top:988px;width:20px;background:#b6b6b6"></div>
<div class="tick" style="left:408px;top:1002px;width:20px;background:#b6b6b6"></div>
<div class="tick" style="left:408px;top:1022px;width:20px;background:#b6b6b6"></div>
<div class="tick" style="left:424px;top:768px;width:4px;background:#b6b6b6"></div>
<div class="tick" style="left:424px;top:782px;width:4px;background:#b6b6b6"></div>
<div class="tick" style="left:424px;top:870px;width:4px;background:#b6b6b6"></div>
<div class="tick" style="left:424px;top:878px;width:4px;background:#b6b6b6"></div>
<div class="tick" style="left:424px;top:894px;width:4px;background:#b6b6b6"></div>
<div class="tick" style="left:424px;top:902px;width:4px;background:#b6b6b6"></div>
<div class="tick" style="left:424px;top:908px;width:4px;background:#b6b6b6"></div>
<div class="tick" style="left:424px;top:920px;width:4px;background:#b6b6b6"></div>
<div class="tick" style="left:424px;top:926px;width:4px;background:#b6b6b6"></div>
<div class="tick" style="left:424px;top:932px;width:4px;background:#b6b6b6"></div>
<div class="tick" style="left:424px;top:936px;width:4px;background:#b6b6b6"></div>
<div class="tick" style="left:424px;top:946px;width:4px;background:#b6b6b6"></div>
<div class="tick" style="left:424px;top:950px;width:4px;background:#b6b6b6"></div>
<div class="tick" style="left:424px;top:954px;width:4px;background:#b6b6b6"></div>
<div class="tick" style="left:424px;top:968px;width:4px;background:#b6b6b6"></div>
<div class="tick" style="left:424px;top:974px;width:4px;background:#b6b6b6"></div>
<div class="tick" style="left:424px;top:978px;width:4px;background:#b6b6b6"></div>
<div class="tick" style="left:424px;top:984px;width:4px;background:#b6b6b6"></div>
<div class="tick" style="left:424px;top:996px;width:4px;background:#b6b6b6"></div>
<div class="tick" style="left:424px;top:1010px;width:4px;background:#b6b6b6"></div>
<div class="tick" style="left:424px;top:1014px;width:4px;background:#b6b6b6"></div>
<div class="cap" style="left:413px;top:890px"></div>
<div class="lbl" style="left:454px;top:748.5px;color:#c2c2c2">0</div>
<div class="dash" style="left:480px;top:754px;width:6px;background:#c2c2c2"></div>
<div class="lbl" style="left:454px;top:766.5px;color:#c2c2c2">3</div>
<div class="dash" style="left:480px;top:772px;width:6px;background:#c2c2c2"></div>
<div class="lbl" style="left:454px;top:784.5px;color:#c2c2c2">6</div>
<div class="dash" style="left:480px;top:790px;width:6px;background:#c2c2c2"></div>
<div class="lbl" style="left:454px;top:802.5px;color:#c2c2c2">9</div>
<div class="dash" style="left:480px;top:808px;width:6px;background:#c2c2c2"></div>
<div class="lbl" style="left:454px;top:820.5px;color:#c2c2c2">12</div>
<div class="dash" style="left:480px;top:826px;width:6px;background:#c2c2c2"></div>
<div class="lbl" style="left:454px;top:838.5px;color:#c2c2c2">15</div>
<div class="dash" style="left:480px;top:844px;width:6px;background:#c2c2c2"></div>
<div class="lbl" style="left:454px;top:856.5px;color:#c2c2c2">18</div>
<div class="dash" style="left:480px;top:862px;width:6px;background:#c2c2c2"></div>
<div class="lbl" style="left:454px;top:874.5px;color:#c2c2c2">21</div>
<div class="dash" style="left:480px;top:880px;width:6px;background:#c2c2c2"></div>
<div class="lbl" style="left:454px;top:892.5px;color:#c2c2c2">24</div>
<div class="dash" style="left:480px;top:898px;width:6px;background:#c2c2c2"></div>
<div class="lbl" style="left:454px;top:916.5px;color:#c2c2c2">30</div>
<div class="dash" style="left:480px;top:922px;width:6px;background:#c2c2c2"></div>
<div class="lbl" style="left:454px;top:936.5px;color:#c2c2c2">35</div>
<div class="dash" style="left:480px;top:942px;width:6px;background:#c2c2c2"></div>
<div class="lbl" style="left:454px;top:956.5px;color:#c2c2c2">40</div>
<div class="dash" style="left:480px;top:962px;width:6px;background:#c2c2c2"></div>
<div class="lbl" style="left:454px;top:976.5px;color:#c2c2c2">45</div>
<div class="dash" style="left:480px;top:982px;width:6px;background:#c2c2c2"></div>
<div class="lbl" style="left:454px;top:996.5px;color:#c2c2c2">50</div>
<div class="dash" style="left:480px;top:1002px;width:6px;background:#c2c2c2"></div>
<div class="lbl" style="left:454px;top:1016.5px;color:#c2c2c2">60</div>
<div class="dash" style="left:480px;top:1022px;width:6px;background:#c2c2c2"></div>
<div class="dot" style="left:484px;top:760px;background:#c2c2c2"></div>
<div class="dot" style="left:484px;top:766px;background:#c2c2c2"></div>
<div class="dot" style="left:484px;top:778px;background:#c2c2c2"></div>
<div class="dot" style="left:484px;top:784px;background:#c2c2c2"></div>
<div class="dot" style="left:484px;top:796px;background:#c2c2c2"></div>
<div class="dot" style="left:484px;top:802px;background:#c2c2c2"></div>
<div class="dot" style="left:484px;top:814px;background:#c2c2c2"></div>
<div class="dot" style="left:484px;top:820px;background:#c2c2c2"></div>
<div class="dot" style="left:484px;top:832px;background:#c2c2c2"></div>
<div class="dot" style="left:484px;top:838px;background:#c2c2c2"></div>
<div class="dot" style="left:484px;top:850px;background:#c2c2c2"></div>
<div class="dot" style="left:484px;top:856px;background:#c2c2c2"></div>
<div class="dot" style="left:484px;top:868px;background:#c2c2c2"></div>
<div class="dot" style="left:484px;top:874px;background:#c2c2c2"></div>
<div class="dot" style="left:484px;top:886px;background:#c2c2c2"></div>
<div class="dot" style="left:484px;top:892px;background:#c2c2c2"></div>
<div class="dot" style="left:484px;top:902px;background:#c2c2c2"></div>
<div class="dot" style="left:484px;top:906px;background:#c2c2c2"></div>
<div class="dot" style="left:484px;top:910px;background:#c2c2c2"></div>
<div class="dot" style="left:484px;top:914px;background:#c2c2c2"></div>
<div class="dot" style="left:484px;top:918px;background:#c2c2c2"></div>
<div class="dot" style="left:484px;top:926px;background:#c2c2c2"></div>
<div class="dot" style="left:484px;top:930px;background:#c2c2c2"></div>
<div class="dot" style="left:484px;top:934px;background:#c2c2c2"></div>
<div class="dot" style="left:484px;top:938px;background:#c2c2c2"></div>
<div class="dot" style="left:484px;top:946px;background:#c2c2c2"></div>
<div class="dot" style="left:484px;top:950px;background:#c2c2c2"></div>
<div class="dot" style="left:484px;top:954px;background:#c2c2c2"></div>
<div class="dot" style="left:484px;top:958px;background:#c2c2c2"></div>
<div class="dot" style="left:484px;top:966px;background:#c2c2c2"></div>
<div class="dot" style="left:484px;top:970px;background:#c2c2c2"></div>
<div class="dot" style="left:484px;top:974px;background:#c2c2c2"></div>
<div class="dot" style="left:484px;top:978px;background:#c2c2c2"></div>
<div class="dot" style="left:484px;top:986px;background:#c2c2c2"></div>
<div class="dot" style="left:484px;top:990px;background:#c2c2c2"></div>
<div class="dot" style="left:484px;top:994px;background:#c2c2c2"></div>
<div class="dot" style="left:484px;top:998px;background:#c2c2c2"></div>
<div class="dot" style="left:484px;top:1006px;background:#c2c2c2"></div>
<div class="dot" style="left:484px;top:1010px;background:#c2c2c2"></div>
<div class="dot" style="left:484px;top:1014px;background:#c2c2c2"></div>
<div class="dot" style="left:484px;top:1018px;background:#c2c2c2"></div>
<div class="meter" style="left:486px;top:752px;height:274px">
<div class="bar" style="left:0px;top:92px;height:178px;background-position:0 -92px;background-size:6px 270px"></div>
<div class="bar" style="left:10px;top:116px;height:154px;background-position:0 -116px;background-size:6px 270px"></div>
</div>
<div class="ms" style="left:406px;top:1076px;width:56px;height:35px;">M</div>
<div class="ms" style="left:466px;top:1076px;width:56px;height:35px;">S</div>
<div class="btn dk" style="left:540px;top:28px;width:116px;height:35px;">Setting</div>
<div class="slot" style="left:542px;top:72px;width:112px;height:14px"></div>
<div class="slot" style="left:542px;top:94px;width:112px;height:58px"></div>
<div class="btn" style="left:540px;top:216px;width:116px;height:35px;">Btt11-12</div>
<div class="rbox" style="left:540px;top:266px;width:116px;height:36px"></div>
<div class="rbox" style="left:540px;top:320px;width:76px;height:36px"></div>
<div class="rbox" style="left:624px;top:322px;width:32px;height:32px;border-radius:50%"></div>
<div class="btn" style="left:540px;top:372px;width:116px;height:35px;border-color:#383838;letter-spacing:0.5px;text-indent:0.5px">St Out</div>
<div class="dbox" style="left:542px;top:418px;width:112px;height:36px"></div>
<div class="btn" style="left:540px;top:464px;width:116px;height:35px;border-color:#383838;letter-spacing:0.3px;text-indent:0.3px">Read</div>
<div class="a" style="left:571px;top:529px;width:54px;height:25px;background:linear-gradient(#3e7e3e 0,#2e6a2e 2px,#2a622a 5px,#1f4e1f 6px,#1a421a 100%);border-radius:2px;box-shadow:0 1px 1px rgba(0,0,0,.3)"></div>
<svg class="a" style="left:571px;top:529px" width="54" height="25" viewBox="0 0 54 25"><path d="M21.2,6.8 L21.2,19" stroke="#3cc03c" stroke-width="1.7"/><path d="M33.6,2 L33.6,15.8" stroke="#3cc03c" stroke-width="1.7"/><path d="M20.4,5.8 L34.4,1.2 L34.4,4.6 L20.4,9.4 Z" fill="#3cc03c"/><ellipse cx="18.4" cy="19.6" rx="3.4" ry="2.5" transform="rotate(-22 18.4 19.6)" fill="#3cc03c"/><ellipse cx="30.8" cy="16.2" rx="3.4" ry="2.5" transform="rotate(-22 30.8 16.2)" fill="#3cc03c"/></svg>
<svg class="a" style="left:559px;top:585px" width="80" height="80" viewBox="0 0 80 80"><defs><linearGradient id="kf" x1="0" y1="0" x2="0" y2="1"><stop offset="0" stop-color="#eeeeee"/><stop offset="0.5" stop-color="#b4b4b4"/><stop offset="1" stop-color="#7c7c7c"/></linearGradient><radialGradient id="ki" cx="0.5" cy="0.45" r="0.6"><stop offset="0" stop-color="#aaaaaa"/><stop offset="1" stop-color="#9c9c9c"/></radialGradient><linearGradient id="kw" x1="0" y1="0" x2="0" y2="1"><stop offset="0" stop-color="#3c3c3c"/><stop offset="1" stop-color="#555"/></linearGradient></defs><circle cx="40" cy="40" r="38" fill="rgba(255,255,255,0.07)"/><circle cx="40" cy="40" r="37" fill="#242424"/><path d="M58.73,67.77 A33.5,33.5 0 0 1 21.27,67.77 L26.58,59.90 A24,24 0 0 0 53.42,59.90 Z" fill="url(#kw)"/><line x1="40.00" y1="15.00" x2="40.00" y2="6.00" stroke="#22ee22" stroke-width="2.2"/><circle cx="40" cy="40.5" r="25" fill="url(#kf)"/><circle cx="40" cy="41.5" r="22.5" fill="url(#ki)"/><circle cx="40.00" cy="19.50" r="2.3" fill="#151515"/></svg>
<div class="vbox" style="left:542px;top:674px;width:54px;height:36px">11.7</div>
<div class="vbox" style="left:600px;top:674px;width:54px;height:36px;color:#3cc83c">-11</div>
<div class="track" style="left:562px;top:752px;height:274px;background:#393939"></div>
<div class="tick" style="left:542px;top:754px;width:20px;background:#b6b6b6"></div>
<div class="tick" style="left:542px;top:796px;width:20px;background:#b6b6b6"></div>
<div class="tick" style="left:542px;top:832px;width:20px;background:#dedede"></div>
<div class="tick" style="left:542px;top:862px;width:20px;background:#b6b6b6"></div>
<div class="tick" style="left:542px;top:886px;width:20px;background:#b6b6b6"></div>
<div class="tick" style="left:542px;top:914px;width:20px;background:#b6b6b6"></div>
<div class="tick" style="left:542px;top:940px;width:20px;background:#b6b6b6"></div>
<div class="tick" style="left:542px;top:960px;width:20px;background:#b6b6b6"></div>
<div class="tick" style="left:542px;top:988px;width:20px;background:#b6b6b6"></div>
<div class="tick" style="left:542px;top:1002px;width:20px;background:#b6b6b6"></div>
<div class="tick" style="left:542px;top:1022px;width:20px;background:#b6b6b6"></div>
<div class="tick" style="left:558px;top:768px;width:4px;background:#b6b6b6"></div>
<div class="tick" style="left:558px;top:782px;width:4px;background:#b6b6b6"></div>
<div class="tick" style="left:558px;top:870px;width:4px;background:#b6b6b6"></div>
<div class="tick" style="left:558px;top:878px;width:4px;background:#b6b6b6"></div>
<div class="tick" style="left:558px;top:894px;width:4px;background:#b6b6b6"></div>
<div class="tick" style="left:558px;top:902px;width:4px;background:#b6b6b6"></div>
<div class="tick" style="left:558px;top:908px;width:4px;background:#b6b6b6"></div>
<div class="tick" style="left:558px;top:920px;width:4px;background:#b6b6b6"></div>
<div class="tick" style="left:558px;top:926px;width:4px;background:#b6b6b6"></div>
<div class="tick" style="left:558px;top:932px;width:4px;background:#b6b6b6"></div>
<div class="tick" style="left:558px;top:936px;width:4px;background:#b6b6b6"></div>
<div class="tick" style="left:558px;top:946px;width:4px;background:#b6b6b6"></div>
<div class="tick" style="left:558px;top:950px;width:4px;background:#b6b6b6"></div>
<div class="tick" style="left:558px;top:954px;width:4px;background:#b6b6b6"></div>
<div class="tick" style="left:558px;top:968px;width:4px;background:#b6b6b6"></div>
<div class="tick" style="left:558px;top:974px;width:4px;background:#b6b6b6"></div>
<div class="tick" style="left:558px;top:978px;width:4px;background:#b6b6b6"></div>
<div class="tick" style="left:558px;top:984px;width:4px;background:#b6b6b6"></div>
<div class="tick" style="left:558px;top:996px;width:4px;background:#b6b6b6"></div>
<div class="tick" style="left:558px;top:1010px;width:4px;background:#b6b6b6"></div>
<div class="tick" style="left:558px;top:1014px;width:4px;background:#b6b6b6"></div>
<div class="cap" style="left:547px;top:890px"></div>
<div class="lbl" style="left:588px;top:748.5px;color:#c2c2c2">0</div>
<div class="dash" style="left:614px;top:754px;width:6px;background:#c2c2c2"></div>
<div class="lbl" style="left:588px;top:766.5px;color:#c2c2c2">3</div>
<div class="dash" style="left:614px;top:772px;width:6px;background:#c2c2c2"></div>
<div class="lbl" style="left:588px;top:784.5px;color:#c2c2c2">6</div>
<div class="dash" style="left:614px;top:790px;width:6px;background:#c2c2c2"></div>
<div class="lbl" style="left:588px;top:802.5px;color:#c2c2c2">9</div>
<div class="dash" style="left:614px;top:808px;width:6px;background:#c2c2c2"></div>
<div class="lbl" style="left:588px;top:820.5px;color:#c2c2c2">12</div>
<div class="dash" style="left:614px;top:826px;width:6px;background:#c2c2c2"></div>
<div class="lbl" style="left:588px;top:838.5px;color:#c2c2c2">15</div>
<div class="dash" style="left:614px;top:844px;width:6px;background:#c2c2c2"></div>
<div class="lbl" style="left:588px;top:856.5px;color:#c2c2c2">18</div>
<div class="dash" style="left:614px;top:862px;width:6px;background:#c2c2c2"></div>
<div class="lbl" style="left:588px;top:874.5px;color:#c2c2c2">21</div>
<div class="dash" style="left:614px;top:880px;width:6px;background:#c2c2c2"></div>
<div class="lbl" style="left:588px;top:892.5px;color:#c2c2c2">24</div>
<div class="dash" style="left:614px;top:898px;width:6px;background:#c2c2c2"></div>
<div class="lbl" style="left:588px;top:916.5px;color:#c2c2c2">30</div>
<div class="dash" style="left:614px;top:922px;width:6px;background:#c2c2c2"></div>
<div class="lbl" style="left:588px;top:936.5px;color:#c2c2c2">35</div>
<div class="dash" style="left:614px;top:942px;width:6px;background:#c2c2c2"></div>
<div class="lbl" style="left:588px;top:956.5px;color:#c2c2c2">40</div>
<div class="dash" style="left:614px;top:962px;width:6px;background:#c2c2c2"></div>
<div class="lbl" style="left:588px;top:976.5px;color:#c2c2c2">45</div>
<div class="dash" style="left:614px;top:982px;width:6px;background:#c2c2c2"></div>
<div class="lbl" style="left:588px;top:996.5px;color:#c2c2c2">50</div>
<div class="dash" style="left:614px;top:1002px;width:6px;background:#c2c2c2"></div>
<div class="lbl" style="left:588px;top:1016.5px;color:#c2c2c2">60</div>
<div class="dash" style="left:614px;top:1022px;width:6px;background:#c2c2c2"></div>
<div class="dot" style="left:618px;top:760px;background:#c2c2c2"></div>
<div class="dot" style="left:618px;top:766px;background:#c2c2c2"></div>
<div class="dot" style="left:618px;top:778px;background:#c2c2c2"></div>
<div class="dot" style="left:618px;top:784px;background:#c2c2c2"></div>
<div class="dot" style="left:618px;top:796px;background:#c2c2c2"></div>
<div class="dot" style="left:618px;top:802px;background:#c2c2c2"></div>
<div class="dot" style="left:618px;top:814px;background:#c2c2c2"></div>
<div class="dot" style="left:618px;top:820px;background:#c2c2c2"></div>
<div class="dot" style="left:618px;top:832px;background:#c2c2c2"></div>
<div class="dot" style="left:618px;top:838px;background:#c2c2c2"></div>
<div class="dot" style="left:618px;top:850px;background:#c2c2c2"></div>
<div class="dot" style="left:618px;top:856px;background:#c2c2c2"></div>
<div class="dot" style="left:618px;top:868px;background:#c2c2c2"></div>
<div class="dot" style="left:618px;top:874px;background:#c2c2c2"></div>
<div class="dot" style="left:618px;top:886px;background:#c2c2c2"></div>
<div class="dot" style="left:618px;top:892px;background:#c2c2c2"></div>
<div class="dot" style="left:618px;top:902px;background:#c2c2c2"></div>
<div class="dot" style="left:618px;top:906px;background:#c2c2c2"></div>
<div class="dot" style="left:618px;top:910px;background:#c2c2c2"></div>
<div class="dot" style="left:618px;top:914px;background:#c2c2c2"></div>
<div class="dot" style="left:618px;top:918px;background:#c2c2c2"></div>
<div class="dot" style="left:618px;top:926px;background:#c2c2c2"></div>
<div class="dot" style="left:618px;top:930px;background:#c2c2c2"></div>
<div class="dot" style="left:618px;top:934px;background:#c2c2c2"></div>
<div class="dot" style="left:618px;top:938px;background:#c2c2c2"></div>
<div class="dot" style="left:618px;top:946px;background:#c2c2c2"></div>
<div class="dot" style="left:618px;top:950px;background:#c2c2c2"></div>
<div class="dot" style="left:618px;top:954px;background:#c2c2c2"></div>
<div class="dot" style="left:618px;top:958px;background:#c2c2c2"></div>
<div class="dot" style="left:618px;top:966px;background:#c2c2c2"></div>
<div class="dot" style="left:618px;top:970px;background:#c2c2c2"></div>
<div class="dot" style="left:618px;top:974px;background:#c2c2c2"></div>
<div class="dot" style="left:618px;top:978px;background:#c2c2c2"></div>
<div class="dot" style="left:618px;top:986px;background:#c2c2c2"></div>
<div class="dot" style="left:618px;top:990px;background:#c2c2c2"></div>
<div class="dot" style="left:618px;top:994px;background:#c2c2c2"></div>
<div class="dot" style="left:618px;top:998px;background:#c2c2c2"></div>
<div class="dot" style="left:618px;top:1006px;background:#c2c2c2"></div>
<div class="dot" style="left:618px;top:1010px;background:#c2c2c2"></div>
<div class="dot" style="left:618px;top:1014px;background:#c2c2c2"></div>
<div class="dot" style="left:618px;top:1018px;background:#c2c2c2"></div>
<div class="meter" style="left:620px;top:752px;height:274px">
<div class="bar" style="left:0px;top:70px;height:200px;background-position:0 -70px;background-size:6px 270px"></div>
<div class="bar" style="left:10px;top:70px;height:200px;background-position:0 -70px;background-size:6px 270px"></div>
</div>
<div class="ms" style="left:540px;top:1076px;width:56px;height:35px;">M</div>
<div class="ms" style="left:600px;top:1076px;width:56px;height:35px;">S</div>
<div class="btn dk" style="left:674px;top:28px;width:116px;height:35px;">Setting</div>
<div class="slot" style="left:676px;top:72px;width:112px;height:14px"></div>
<div class="slot" style="left:676px;top:94px;width:112px;height:58px"></div>
<div class="btn" style="left:674px;top:216px;width:116px;height:35px;">Btt13-14</div>
<div class="rbox" style="left:674px;top:266px;width:116px;height:36px"></div>
<div class="rbox" style="left:674px;top:320px;width:76px;height:36px"></div>
<div class="rbox" style="left:758px;top:322px;width:32px;height:32px;border-radius:50%"></div>
<div class="btn" style="left:674px;top:372px;width:116px;height:35px;border-color:#383838;letter-spacing:0.5px;text-indent:0.5px">St Out</div>
<div class="dbox" style="left:676px;top:418px;width:112px;height:36px"></div>
<div class="btn" style="left:674px;top:464px;width:116px;height:35px;border-color:#383838;letter-spacing:0.3px;text-indent:0.3px">Read</div>
<div class="a" style="left:705px;top:529px;width:54px;height:25px;background:linear-gradient(#3e7e3e 0,#2e6a2e 2px,#2a622a 5px,#1f4e1f 6px,#1a421a 100%);border-radius:2px;box-shadow:0 1px 1px rgba(0,0,0,.3)"></div>
<svg class="a" style="left:705px;top:529px" width="54" height="25" viewBox="0 0 54 25"><path d="M21.2,6.8 L21.2,19" stroke="#3cc03c" stroke-width="1.7"/><path d="M33.6,2 L33.6,15.8" stroke="#3cc03c" stroke-width="1.7"/><path d="M20.4,5.8 L34.4,1.2 L34.4,4.6 L20.4,9.4 Z" fill="#3cc03c"/><ellipse cx="18.4" cy="19.6" rx="3.4" ry="2.5" transform="rotate(-22 18.4 19.6)" fill="#3cc03c"/><ellipse cx="30.8" cy="16.2" rx="3.4" ry="2.5" transform="rotate(-22 30.8 16.2)" fill="#3cc03c"/></svg>
<svg class="a" style="left:693px;top:585px" width="80" height="80" viewBox="0 0 80 80"><defs><linearGradient id="kf" x1="0" y1="0" x2="0" y2="1"><stop offset="0" stop-color="#eeeeee"/><stop offset="0.5" stop-color="#b4b4b4"/><stop offset="1" stop-color="#7c7c7c"/></linearGradient><radialGradient id="ki" cx="0.5" cy="0.45" r="0.6"><stop offset="0" stop-color="#aaaaaa"/><stop offset="1" stop-color="#9c9c9c"/></radialGradient><linearGradient id="kw" x1="0" y1="0" x2="0" y2="1"><stop offset="0" stop-color="#3c3c3c"/><stop offset="1" stop-color="#555"/></linearGradient></defs><circle cx="40" cy="40" r="38" fill="rgba(255,255,255,0.07)"/><circle cx="40" cy="40" r="37" fill="#242424"/><path d="M58.73,67.77 A33.5,33.5 0 0 1 21.27,67.77 L26.58,59.90 A24,24 0 0 0 53.42,59.90 Z" fill="url(#kw)"/><path d="M40.00,6.00 A34,34 0 0 1 60.37,12.78 L54.38,20.78 A24,24 0 0 0 40.00,16.00 Z" fill="#3e8a40"/><line x1="54.98" y1="19.98" x2="60.37" y2="12.78" stroke="#22ee22" stroke-width="2.2"/><circle cx="40" cy="40.5" r="25" fill="url(#kf)"/><circle cx="40" cy="41.5" r="22.5" fill="url(#ki)"/><circle cx="52.28" cy="23.59" r="2.3" fill="#151515"/><text x="40" y="47.2" text-anchor="middle" font-family="Liberation Sans" font-size="21" fill="#262626" stroke="#262626" stroke-width="0.3">+16</text></svg>
<div class="vbox" style="left:676px;top:674px;width:54px;height:36px">11.7</div>
<div class="vbox" style="left:734px;top:674px;width:54px;height:36px;color:#3cc83c">-9.3</div>
<div class="track" style="left:696px;top:752px;height:274px;background:#393939"></div>
<div class="tick" style="left:676px;top:754px;width:20px;background:#b6b6b6"></div>
<div class="tick" style="left:676px;top:796px;width:20px;background:#b6b6b6"></div>
<div class="tick" style="left:676px;top:832px;width:20px;background:#dedede"></div>
<div class="tick" style="left:676px;top:862px;width:20px;background:#b6b6b6"></div>
<div class="tick" style="left:676px;top:886px;width:20px;background:#b6b6b6"></div>
<div class="tick" style="left:676px;top:914px;width:20px;background:#b6b6b6"></div>
<div class="tick" style="left:676px;top:940px;width:20px;background:#b6b6b6"></div>
<div class="tick" style="left:676px;top:960px;width:20px;background:#b6b6b6"></div>
<div class="tick" style="left:676px;top:988px;width:20px;background:#b6b6b6"></div>
<div class="tick" style="left:676px;top:1002px;width:20px;background:#b6b6b6"></div>
<div class="tick" style="left:676px;top:1022px;width:20px;background:#b6b6b6"></div>
<div class="tick" style="left:692px;top:768px;width:4px;background:#b6b6b6"></div>
<div class="tick" style="left:692px;top:782px;width:4px;background:#b6b6b6"></div>
<div class="tick" style="left:692px;top:870px;width:4px;background:#b6b6b6"></div>
<div class="tick" style="left:692px;top:878px;width:4px;background:#b6b6b6"></div>
<div class="tick" style="left:692px;top:894px;width:4px;background:#b6b6b6"></div>
<div class="tick" style="left:692px;top:902px;width:4px;background:#b6b6b6"></div>
<div class="tick" style="left:692px;top:908px;width:4px;background:#b6b6b6"></div>
<div class="tick" style="left:692px;top:920px;width:4px;background:#b6b6b6"></div>
<div class="tick" style="left:692px;top:926px;width:4px;background:#b6b6b6"></div>
<div class="tick" style="left:692px;top:932px;width:4px;background:#b6b6b6"></div>
<div class="tick" style="left:692px;top:936px;width:4px;background:#b6b6b6"></div>
<div class="tick" style="left:692px;top:946px;width:4px;background:#b6b6b6"></div>
<div class="tick" style="left:692px;top:950px;width:4px;background:#b6b6b6"></div>
<div class="tick" style="left:692px;top:954px;width:4px;background:#b6b6b6"></div>
<div class="tick" style="left:692px;top:968px;width:4px;background:#b6b6b6"></div>
<div class="tick" style="left:692px;top:974px;width:4px;background:#b6b6b6"></div>
<div class="tick" style="left:692px;top:978px;width:4px;background:#b6b6b6"></div>
<div class="tick" style="left:692px;top:984px;width:4px;background:#b6b6b6"></div>
<div class="tick" style="left:692px;top:996px;width:4px;background:#b6b6b6"></div>
<div class="tick" style="left:692px;top:1010px;width:4px;background:#b6b6b6"></div>
<div class="tick" style="left:692px;top:1014px;width:4px;background:#b6b6b6"></div>
<div class="cap" style="left:681px;top:890px"></div>
<div class="lbl" style="left:722px;top:748.5px;color:#c2c2c2">0</div>
<div class="dash" style="left:748px;top:754px;width:6px;background:#c2c2c2"></div>
<div class="lbl" style="left:722px;top:766.5px;color:#c2c2c2">3</div>
<div class="dash" style="left:748px;top:772px;width:6px;background:#c2c2c2"></div>
<div class="lbl" style="left:722px;top:784.5px;color:#c2c2c2">6</div>
<div class="dash" style="left:748px;top:790px;width:6px;background:#c2c2c2"></div>
<div class="lbl" style="left:722px;top:802.5px;color:#c2c2c2">9</div>
<div class="dash" style="left:748px;top:808px;width:6px;background:#c2c2c2"></div>
<div class="lbl" style="left:722px;top:820.5px;color:#c2c2c2">12</div>
<div class="dash" style="left:748px;top:826px;width:6px;background:#c2c2c2"></div>
<div class="lbl" style="left:722px;top:838.5px;color:#c2c2c2">15</div>
<div class="dash" style="left:748px;top:844px;width:6px;background:#c2c2c2"></div>
<div class="lbl" style="left:722px;top:856.5px;color:#c2c2c2">18</div>
<div class="dash" style="left:748px;top:862px;width:6px;background:#c2c2c2"></div>
<div class="lbl" style="left:722px;top:874.5px;color:#c2c2c2">21</div>
<div class="dash" style="left:748px;top:880px;width:6px;background:#c2c2c2"></div>
<div class="lbl" style="left:722px;top:892.5px;color:#c2c2c2">24</div>
<div class="dash" style="left:748px;top:898px;width:6px;background:#c2c2c2"></div>
<div class="lbl" style="left:722px;top:916.5px;color:#c2c2c2">30</div>
<div class="dash" style="left:748px;top:922px;width:6px;background:#c2c2c2"></div>
<div class="lbl" style="left:722px;top:936.5px;color:#c2c2c2">35</div>
<div class="dash" style="left:748px;top:942px;width:6px;background:#c2c2c2"></div>
<div class="lbl" style="left:722px;top:956.5px;color:#c2c2c2">40</div>
<div class="dash" style="left:748px;top:962px;width:6px;background:#c2c2c2"></div>
<div class="lbl" style="left:722px;top:976.5px;color:#c2c2c2">45</div>
<div class="dash" style="left:748px;top:982px;width:6px;background:#c2c2c2"></div>
<div class="lbl" style="left:722px;top:996.5px;color:#c2c2c2">50</div>
<div class="dash" style="left:748px;top:1002px;width:6px;background:#c2c2c2"></div>
<div class="lbl" style="left:722px;top:1016.5px;color:#c2c2c2">60</div>
<div class="dash" style="left:748px;top:1022px;width:6px;background:#c2c2c2"></div>
<div class="dot" style="left:752px;top:760px;background:#c2c2c2"></div>
<div class="dot" style="left:752px;top:766px;background:#c2c2c2"></div>
<div class="dot" style="left:752px;top:778px;background:#c2c2c2"></div>
<div class="dot" style="left:752px;top:784px;background:#c2c2c2"></div>
<div class="dot" style="left:752px;top:796px;background:#c2c2c2"></div>
<div class="dot" style="left:752px;top:802px;background:#c2c2c2"></div>
<div class="dot" style="left:752px;top:814px;background:#c2c2c2"></div>
<div class="dot" style="left:752px;top:820px;background:#c2c2c2"></div>
<div class="dot" style="left:752px;top:832px;background:#c2c2c2"></div>
<div class="dot" style="left:752px;top:838px;background:#c2c2c2"></div>
<div class="dot" style="left:752px;top:850px;background:#c2c2c2"></div>
<div class="dot" style="left:752px;top:856px;background:#c2c2c2"></div>
<div class="dot" style="left:752px;top:868px;background:#c2c2c2"></div>
<div class="dot" style="left:752px;top:874px;background:#c2c2c2"></div>
<div class="dot" style="left:752px;top:886px;background:#c2c2c2"></div>
<div class="dot" style="left:752px;top:892px;background:#c2c2c2"></div>
<div class="dot" style="left:752px;top:902px;background:#c2c2c2"></div>
<div class="dot" style="left:752px;top:906px;background:#c2c2c2"></div>
<div class="dot" style="left:752px;top:910px;background:#c2c2c2"></div>
<div class="dot" style="left:752px;top:914px;background:#c2c2c2"></div>
<div class="dot" style="left:752px;top:918px;background:#c2c2c2"></div>
<div class="dot" style="left:752px;top:926px;background:#c2c2c2"></div>
<div class="dot" style="left:752px;top:930px;background:#c2c2c2"></div>
<div class="dot" style="left:752px;top:934px;background:#c2c2c2"></div>
<div class="dot" style="left:752px;top:938px;background:#c2c2c2"></div>
<div class="dot" style="left:752px;top:946px;background:#c2c2c2"></div>
<div class="dot" style="left:752px;top:950px;background:#c2c2c2"></div>
<div class="dot" style="left:752px;top:954px;background:#c2c2c2"></div>
<div class="dot" style="left:752px;top:958px;background:#c2c2c2"></div>
<div class="dot" style="left:752px;top:966px;background:#c2c2c2"></div>
<div class="dot" style="left:752px;top:970px;background:#c2c2c2"></div>
<div class="dot" style="left:752px;top:974px;background:#c2c2c2"></div>
<div class="dot" style="left:752px;top:978px;background:#c2c2c2"></div>
<div class="dot" style="left:752px;top:986px;background:#c2c2c2"></div>
<div class="dot" style="left:752px;top:990px;background:#c2c2c2"></div>
<div class="dot" style="left:752px;top:994px;background:#c2c2c2"></div>
<div class="dot" style="left:752px;top:998px;background:#c2c2c2"></div>
<div class="dot" style="left:752px;top:1006px;background:#c2c2c2"></div>
<div class="dot" style="left:752px;top:1010px;background:#c2c2c2"></div>
<div class="dot" style="left:752px;top:1014px;background:#c2c2c2"></div>
<div class="dot" style="left:752px;top:1018px;background:#c2c2c2"></div>
<div class="meter" style="left:754px;top:752px;height:274px">
<div class="bar" style="left:0px;top:124px;height:146px;background-position:0 -124px;background-size:6px 270px"></div>
<div class="bar" style="left:10px;top:92px;height:178px;background-position:0 -92px;background-size:6px 270px"></div>
</div>
<div class="ms" style="left:674px;top:1076px;width:56px;height:35px;">M</div>
<div class="ms" style="left:734px;top:1076px;width:56px;height:35px;">S</div>
<div class="btn dk" style="left:808px;top:28px;width:116px;height:35px;">Setting</div>
<div class="slot" style="left:810px;top:72px;width:112px;height:14px"></div>
<div class="slot" style="left:810px;top:94px;width:112px;height:58px"></div>
<div class="btn" style="left:808px;top:216px;width:116px;height:35px;">Btt15-16</div>
<div class="rbox" style="left:808px;top:266px;width:116px;height:36px"></div>
<div class="rbox" style="left:808px;top:320px;width:76px;height:36px"></div>
<div class="rbox" style="left:892px;top:322px;width:32px;height:32px;border-radius:50%"></div>
<div class="btn" style="left:808px;top:372px;width:116px;height:35px;border-color:#383838;letter-spacing:0.5px;text-indent:0.5px">St Out</div>
<div class="dbox" style="left:810px;top:418px;width:112px;height:36px"></div>
<div class="btn" style="left:808px;top:464px;width:116px;height:35px;border-color:#383838;letter-spacing:0.3px;text-indent:0.3px">Read</div>
<div class="a" style="left:839px;top:529px;width:54px;height:25px;background:linear-gradient(#3e7e3e 0,#2e6a2e 2px,#2a622a 5px,#1f4e1f 6px,#1a421a 100%);border-radius:2px;box-shadow:0 1px 1px rgba(0,0,0,.3)"></div>
<svg class="a" style="left:839px;top:529px" width="54" height="25" viewBox="0 0 54 25"><path d="M21.2,6.8 L21.2,19" stroke="#3cc03c" stroke-width="1.7"/><path d="M33.6,2 L33.6,15.8" stroke="#3cc03c" stroke-width="1.7"/><path d="M20.4,5.8 L34.4,1.2 L34.4,4.6 L20.4,9.4 Z" fill="#3cc03c"/><ellipse cx="18.4" cy="19.6" rx="3.4" ry="2.5" transform="rotate(-22 18.4 19.6)" fill="#3cc03c"/><ellipse cx="30.8" cy="16.2" rx="3.4" ry="2.5" transform="rotate(-22 30.8 16.2)" fill="#3cc03c"/></svg>
<svg class="a" style="left:827px;top:585px" width="80" height="80" viewBox="0 0 80 80"><defs><linearGradient id="kf" x1="0" y1="0" x2="0" y2="1"><stop offset="0" stop-color="#eeeeee"/><stop offset="0.5" stop-color="#b4b4b4"/><stop offset="1" stop-color="#7c7c7c"/></linearGradient><radialGradient id="ki" cx="0.5" cy="0.45" r="0.6"><stop offset="0" stop-color="#aaaaaa"/><stop offset="1" stop-color="#9c9c9c"/></radialGradient><linearGradient id="kw" x1="0" y1="0" x2="0" y2="1"><stop offset="0" stop-color="#3c3c3c"/><stop offset="1" stop-color="#555"/></linearGradient></defs><circle cx="40" cy="40" r="38" fill="rgba(255,255,255,0.07)"/><circle cx="40" cy="40" r="37" fill="#242424"/><path d="M58.73,67.77 A33.5,33.5 0 0 1 21.27,67.77 L26.58,59.90 A24,24 0 0 0 53.42,59.90 Z" fill="url(#kw)"/><path d="M7.28,49.26 A34,34 0 0 1 40.00,6.00 L40.00,16.00 A24,24 0 0 0 16.91,46.53 Z" fill="#3e8a40"/><line x1="15.94" y1="46.81" x2="7.28" y2="49.26" stroke="#22ee22" stroke-width="2.2"/><circle cx="40" cy="40.5" r="25" fill="url(#kf)"/><circle cx="40" cy="41.5" r="22.5" fill="url(#ki)"/><circle cx="20.27" cy="45.58" r="2.3" fill="#151515"/><text x="40" y="47.2" text-anchor="middle" font-family="Liberation Sans" font-size="21" fill="#262626" stroke="#262626" stroke-width="0.3">-46</text></svg>
<div class="vbox" style="left:810px;top:674px;width:54px;height:36px">11.7</div>
<div class="vbox" style="left:868px;top:674px;width:54px;height:36px;color:#3cc83c">-11</div>
<div class="track" style="left:830px;top:752px;height:274px;background:#393939"></div>
<div class="tick" style="left:810px;top:754px;width:20px;background:#b6b6b6"></div>
<div class="tick" style="left:810px;top:796px;width:20px;background:#b6b6b6"></div>
<div class="tick" style="left:810px;top:832px;width:20px;background:#dedede"></div>
<div class="tick" style="left:810px;top:862px;width:20px;background:#b6b6b6"></div>
<div class="tick" style="left:810px;top:886px;width:20px;background:#b6b6b6"></div>
<div class="tick" style="left:810px;top:914px;width:20px;background:#b6b6b6"></div>
<div class="tick" style="left:810px;top:940px;width:20px;background:#b6b6b6"></div>
<div class="tick" style="left:810px;top:960px;width:20px;background:#b6b6b6"></div>
<div class="tick" style="left:810px;top:988px;width:20px;background:#b6b6b6"></div>
<div class="tick" style="left:810px;top:1002px;width:20px;background:#b6b6b6"></div>
<div class="tick" style="left:810px;top:1022px;width:20px;background:#b6b6b6"></div>
<div class="tick" style="left:826px;top:768px;width:4px;background:#b6b6b6"></div>
<div class="tick" style="left:826px;top:782px;width:4px;background:#b6b6b6"></div>
<div class="tick" style="left:826px;top:870px;width:4px;background:#b6b6b6"></div>
<div class="tick" style="left:826px;top:878px;width:4px;background:#b6b6b6"></div>
<div class="tick" style="left:826px;top:894px;width:4px;background:#b6b6b6"></div>
<div class="tick" style="left:826px;top:902px;width:4px;background:#b6b6b6"></div>
<div class="tick" style="left:826px;top:908px;width:4px;background:#b6b6b6"></div>
<div class="tick" style="left:826px;top:920px;width:4px;background:#b6b6b6"></div>
<div class="tick" style="left:826px;top:926px;width:4px;background:#b6b6b6"></div>
<div class="tick" style="left:826px;top:932px;width:4px;background:#b6b6b6"></div>
<div class="tick" style="left:826px;top:936px;width:4px;background:#b6b6b6"></div>
<div class="tick" style="left:826px;top:946px;width:4px;background:#b6b6b6"></div>
<div class="tick" style="left:826px;top:950px;width:4px;background:#b6b6b6"></div>
<div class="tick" style="left:826px;top:954px;width:4px;background:#b6b6b6"></div>
<div class="tick" style="left:826px;top:968px;width:4px;background:#b6b6b6"></div>
<div class="tick" style="left:826px;top:974px;width:4px;background:#b6b6b6"></div>
<div class="tick" style="left:826px;top:978px;width:4px;background:#b6b6b6"></div>
<div class="tick" style="left:826px;top:984px;width:4px;background:#b6b6b6"></div>
<div class="tick" style="left:826px;top:996px;width:4px;background:#b6b6b6"></div>
<div class="tick" style="left:826px;top:1010px;width:4px;background:#b6b6b6"></div>
<div class="tick" style="left:826px;top:1014px;width:4px;background:#b6b6b6"></div>
<div class="cap" style="left:815px;top:890px"></div>
<div class="lbl" style="left:856px;top:748.5px;color:#c2c2c2">0</div>
<div class="dash" style="left:882px;top:754px;width:6px;background:#c2c2c2"></div>
<div class="lbl" style="left:856px;top:766.5px;color:#c2c2c2">3</div>
<div class="dash" style="left:882px;top:772px;width:6px;background:#c2c2c2"></div>
<div class="lbl" style="left:856px;top:784.5px;color:#c2c2c2">6</div>
<div class="dash" style="left:882px;top:790px;width:6px;background:#c2c2c2"></div>
<div class="lbl" style="left:856px;top:802.5px;color:#c2c2c2">9</div>
<div class="dash" style="left:882px;top:808px;width:6px;background:#c2c2c2"></div>
<div class="lbl" style="left:856px;top:820.5px;color:#c2c2c2">12</div>
<div class="dash" style="left:882px;top:826px;width:6px;background:#c2c2c2"></div>
<div class="lbl" style="left:856px;top:838.5px;color:#c2c2c2">15</div>
<div class="dash" style="left:882px;top:844px;width:6px;background:#c2c2c2"></div>
<div class="lbl" style="left:856px;top:856.5px;color:#c2c2c2">18</div>
<div class="dash" style="left:882px;top:862px;width:6px;background:#c2c2c2"></div>
<div class="lbl" style="left:856px;top:874.5px;color:#c2c2c2">21</div>
<div class="dash" style="left:882px;top:880px;width:6px;background:#c2c2c2"></div>
<div class="lbl" style="left:856px;top:892.5px;color:#c2c2c2">24</div>
<div class="dash" style="left:882px;top:898px;width:6px;background:#c2c2c2"></div>
<div class="lbl" style="left:856px;top:916.5px;color:#c2c2c2">30</div>
<div class="dash" style="left:882px;top:922px;width:6px;background:#c2c2c2"></div>
<div class="lbl" style="left:856px;top:936.5px;color:#c2c2c2">35</div>
<div class="dash" style="left:882px;top:942px;width:6px;background:#c2c2c2"></div>
<div class="lbl" style="left:856px;top:956.5px;color:#c2c2c2">40</div>
<div class="dash" style="left:882px;top:962px;width:6px;background:#c2c2c2"></div>
<div class="lbl" style="left:856px;top:976.5px;color:#c2c2c2">45</div>
<div class="dash" style="left:882px;top:982px;width:6px;background:#c2c2c2"></div>
<div class="lbl" style="left:856px;top:996.5px;color:#c2c2c2">50</div>
<div class="dash" style="left:882px;top:1002px;width:6px;background:#c2c2c2"></div>
<div class="lbl" style="left:856px;top:1016.5px;color:#c2c2c2">60</div>
<div class="dash" style="left:882px;top:1022px;width:6px;background:#c2c2c2"></div>
<div class="dot" style="left:886px;top:760px;background:#c2c2c2"></div>
<div class="dot" style="left:886px;top:766px;background:#c2c2c2"></div>
<div class="dot" style="left:886px;top:778px;background:#c2c2c2"></div>
<div class="dot" style="left:886px;top:784px;background:#c2c2c2"></div>
<div class="dot" style="left:886px;top:796px;background:#c2c2c2"></div>
<div class="dot" style="left:886px;top:802px;background:#c2c2c2"></div>
<div class="dot" style="left:886px;top:814px;background:#c2c2c2"></div>
<div class="dot" style="left:886px;top:820px;background:#c2c2c2"></div>
<div class="dot" style="left:886px;top:832px;background:#c2c2c2"></div>
<div class="dot" style="left:886px;top:838px;background:#c2c2c2"></div>
<div class="dot" style="left:886px;top:850px;background:#c2c2c2"></div>
<div class="dot" style="left:886px;top:856px;background:#c2c2c2"></div>
<div class="dot" style="left:886px;top:868px;background:#c2c2c2"></div>
<div class="dot" style="left:886px;top:874px;background:#c2c2c2"></div>
<div class="dot" style="left:886px;top:886px;background:#c2c2c2"></div>
<div class="dot" style="left:886px;top:892px;background:#c2c2c2"></div>
<div class="dot" style="left:886px;top:902px;background:#c2c2c2"></div>
<div class="dot" style="left:886px;top:906px;background:#c2c2c2"></div>
<div class="dot" style="left:886px;top:910px;background:#c2c2c2"></div>
<div class="dot" style="left:886px;top:914px;background:#c2c2c2"></div>
<div class="dot" style="left:886px;top:918px;background:#c2c2c2"></div>
<div class="dot" style="left:886px;top:926px;background:#c2c2c2"></div>
<div class="dot" style="left:886px;top:930px;background:#c2c2c2"></div>
<div class="dot" style="left:886px;top:934px;background:#c2c2c2"></div>
<div class="dot" style="left:886px;top:938px;background:#c2c2c2"></div>
<div class="dot" style="left:886px;top:946px;background:#c2c2c2"></div>
<div class="dot" style="left:886px;top:950px;background:#c2c2c2"></div>
<div class="dot" style="left:886px;top:954px;background:#c2c2c2"></div>
<div class="dot" style="left:886px;top:958px;background:#c2c2c2"></div>
<div class="dot" style="left:886px;top:966px;background:#c2c2c2"></div>
<div class="dot" style="left:886px;top:970px;background:#c2c2c2"></div>
<div class="dot" style="left:886px;top:974px;background:#c2c2c2"></div>
<div class="dot" style="left:886px;top:978px;background:#c2c2c2"></div>
<div class="dot" style="left:886px;top:986px;background:#c2c2c2"></div>
<div class="dot" style="left:886px;top:990px;background:#c2c2c2"></div>
<div class="dot" style="left:886px;top:994px;background:#c2c2c2"></div>
<div class="dot" style="left:886px;top:998px;background:#c2c2c2"></div>
<div class="dot" style="left:886px;top:1006px;background:#c2c2c2"></div>
<div class="dot" style="left:886px;top:1010px;background:#c2c2c2"></div>
<div class="dot" style="left:886px;top:1014px;background:#c2c2c2"></div>
<div class="dot" style="left:886px;top:1018px;background:#c2c2c2"></div>
<div class="meter" style="left:888px;top:752px;height:274px">
<div class="bar" style="left:0px;top:106px;height:164px;background-position:0 -106px;background-size:6px 270px"></div>
<div class="bar" style="left:10px;top:206px;height:64px;background-position:0 -206px;background-size:6px 270px"></div>
</div>
<div class="ms" style="left:808px;top:1076px;width:56px;height:35px;">M</div>
<div class="ms" style="left:868px;top:1076px;width:56px;height:35px;">S</div>
<div class="btn btn2" style="left:942px;top:28px;width:116px;height:35px;color:#1a1a1a">Setting</div>
<div class="slot" style="left:944px;top:72px;width:112px;height:14px;border-color:#3c3c3c;box-shadow:0 1px 0 rgba(255,255,255,.08)"></div>
<div class="slot" style="left:944px;top:94px;width:112px;height:58px;border-color:#3c3c3c;box-shadow:0 1px 0 rgba(255,255,255,.08)"></div>
<div class="btn btn2" style="left:942px;top:216px;width:116px;height:35px;"></div>
<svg class="a" style="left:986px;top:224px" width="28" height="20" viewBox="0 0 28 20"><circle cx="10" cy="10" r="7.5" stroke="#c4c4c4" stroke-width="1.6" fill="none"/><circle cx="18" cy="10" r="7.5" stroke="#c4c4c4" stroke-width="1.6" fill="none"/></svg>
<div class="rbox" style="left:942px;top:266px;width:116px;height:36px;border-color:#3c3c3c;box-shadow:0 1px 0 rgba(255,255,255,.08)"></div>
<div class="dbox" style="left:944px;top:418px;width:112px;height:36px;border-color:#111;background:linear-gradient(#2a2a2a,#222);box-shadow:inset 0 0 0 1px #333,0 1px 0 rgba(255,255,255,.08)"></div>
<div class="btn btn2" style="left:942px;top:464px;width:116px;height:35px;color:#dcdcdc">Read</div>
<div class="a" style="left:973px;top:529px;width:54px;height:25px;background:linear-gradient(#3e5c8c 0,#344f7c 2px,#2e4670 5px,#243a60 6px,#1d2f50 100%);border-radius:2px;box-shadow:0 1px 1px rgba(0,0,0,.35)"></div>
<svg class="a" style="left:973px;top:529px" width="54" height="25" viewBox="0 0 54 25"><path d="M14,12.8 L20,11 L27,10.2 L34,11 L40,12.8 L34,14.6 L27,15.4 L20,14.6 Z" fill="#4a7ed0"/><rect x="18" y="9.5" width="1.3" height="6.0" fill="#4f86d8" opacity="0.85"/><rect x="19.5" y="8" width="1.3" height="8.5" fill="#4f86d8" opacity="0.85"/><rect x="21" y="6.5" width="1.3" height="11.0" fill="#4f86d8" opacity="0.85"/><rect x="22.5" y="9" width="1.3" height="6.5" fill="#4f86d8" opacity="0.85"/><rect x="24" y="5.5" width="1.3" height="13.0" fill="#4f86d8" opacity="0.85"/><rect x="25.5" y="7" width="1.3" height="10" fill="#4f86d8" opacity="0.85"/><rect x="27" y="3.5" width="1.3" height="17.0" fill="#4f86d8" opacity="0.85"/><rect x="28.5" y="6.5" width="1.3" height="11.0" fill="#4f86d8" opacity="0.85"/><rect x="30" y="4.5" width="1.3" height="13.5" fill="#4f86d8" opacity="0.85"/><rect x="31.5" y="8" width="1.3" height="8.5" fill="#4f86d8" opacity="0.85"/><rect x="33" y="6.5" width="1.3" height="9.0" fill="#4f86d8" opacity="0.85"/><rect x="34.5" y="9" width="1.3" height="6" fill="#4f86d8" opacity="0.85"/><rect x="36" y="6" width="1.3" height="11" fill="#4f86d8" opacity="0.85"/></svg>
<svg class="a" style="left:961px;top:585px" width="80" height="80" viewBox="0 0 80 80"><defs><linearGradient id="kf" x1="0" y1="0" x2="0" y2="1"><stop offset="0" stop-color="#eeeeee"/><stop offset="0.5" stop-color="#b4b4b4"/><stop offset="1" stop-color="#7c7c7c"/></linearGradient><radialGradient id="ki" cx="0.5" cy="0.45" r="0.6"><stop offset="0" stop-color="#aaaaaa"/><stop offset="1" stop-color="#9c9c9c"/></radialGradient><linearGradient id="kw" x1="0" y1="0" x2="0" y2="1"><stop offset="0" stop-color="#3c3c3c"/><stop offset="1" stop-color="#555"/></linearGradient></defs><circle cx="40" cy="40" r="38" fill="rgba(255,255,255,0.07)"/><circle cx="40" cy="40" r="37" fill="#222"/><path d="M58.73,67.77 A33.5,33.5 0 0 1 21.27,67.77 L26.58,59.90 A24,24 0 0 0 53.42,59.90 Z" fill="url(#kw)"/><line x1="40.00" y1="15.00" x2="40.00" y2="6.00" stroke="#22ee22" stroke-width="2.2"/><circle cx="40" cy="40.5" r="25" fill="url(#kf)"/><circle cx="40" cy="41.5" r="22.5" fill="url(#ki)"/><circle cx="40.00" cy="19.50" r="2.3" fill="#151515"/></svg>
<div class="vbox" style="left:944px;top:674px;width:54px;height:36px;background:#262626;border-color:#151515;box-shadow:inset 0 0 0 1px #333;color:#cfcfcf">0.0</div>
<div class="vbox" style="left:1002px;top:674px;width:54px;height:36px;background:#262626;border-color:#151515;box-shadow:inset 0 0 0 1px #333;color:#f2e41c">-1.8</div>
<div class="track" style="left:964px;top:752px;height:274px;background:#262626"></div>
<div class="tick" style="left:944px;top:754px;width:20px;background:#8c8c8c"></div>
<div class="tick" style="left:944px;top:796px;width:20px;background:#8c8c8c"></div>
<div class="tick" style="left:944px;top:832px;width:20px;background:#f0f0f0"></div>
<div class="tick" style="left:944px;top:862px;width:20px;background:#8c8c8c"></div>
<div class="tick" style="left:944px;top:886px;width:20px;background:#8c8c8c"></div>
<div class="tick" style="left:944px;top:914px;width:20px;background:#8c8c8c"></div>
<div class="tick" style="left:944px;top:940px;width:20px;background:#8c8c8c"></div>
<div class="tick" style="left:944px;top:960px;width:20px;background:#8c8c8c"></div>
<div class="tick" style="left:944px;top:988px;width:20px;background:#8c8c8c"></div>
<div class="tick" style="left:944px;top:1002px;width:20px;background:#8c8c8c"></div>
<div class="tick" style="left:944px;top:1022px;width:20px;background:#8c8c8c"></div>
<div class="tick" style="left:960px;top:768px;width:4px;background:#8c8c8c"></div>
<div class="tick" style="left:960px;top:782px;width:4px;background:#8c8c8c"></div>
<div class="tick" style="left:960px;top:870px;width:4px;background:#8c8c8c"></div>
<div class="tick" style="left:960px;top:878px;width:4px;background:#8c8c8c"></div>
<div class="tick" style="left:960px;top:894px;width:4px;background:#8c8c8c"></div>
<div class="tick" style="left:960px;top:902px;width:4px;background:#8c8c8c"></div>
<div class="tick" style="left:960px;top:908px;width:4px;background:#8c8c8c"></div>
<div class="tick" style="left:960px;top:920px;width:4px;background:#8c8c8c"></div>
<div class="tick" style="left:960px;top:926px;width:4px;background:#8c8c8c"></div>
<div class="tick" style="left:960px;top:932px;width:4px;background:#8c8c8c"></div>
<div class="tick" style="left:960px;top:936px;width:4px;background:#8c8c8c"></div>
<div class="tick" style="left:960px;top:946px;width:4px;background:#8c8c8c"></div>
<div class="tick" style="left:960px;top:950px;width:4px;background:#8c8c8c"></div>
<div class="tick" style="left:960px;top:954px;width:4px;background:#8c8c8c"></div>
<div class="tick" style="left:960px;top:968px;width:4px;background:#8c8c8c"></div>
<div class="tick" style="left:960px;top:974px;width:4px;background:#8c8c8c"></div>
<div class="tick" style="left:960px;top:978px;width:4px;background:#8c8c8c"></div>
<div class="tick" style="left:960px;top:984px;width:4px;background:#8c8c8c"></div>
<div class="tick" style="left:960px;top:996px;width:4px;background:#8c8c8c"></div>
<div class="tick" style="left:960px;top:1010px;width:4px;background:#8c8c8c"></div>
<div class="tick" style="left:960px;top:1014px;width:4px;background:#8c8c8c"></div>
<div class="cap" style="left:949px;top:798px"></div>
<div class="lbl" style="left:990px;top:748.5px;color:#8e8e8e">0</div>
<div class="dash" style="left:1016px;top:754px;width:6px;background:#8e8e8e"></div>
<div class="lbl" style="left:990px;top:766.5px;color:#8e8e8e">3</div>
<div class="dash" style="left:1016px;top:772px;width:6px;background:#8e8e8e"></div>
<div class="lbl" style="left:990px;top:784.5px;color:#8e8e8e">6</div>
<div class="dash" style="left:1016px;top:790px;width:6px;background:#8e8e8e"></div>
<div class="lbl" style="left:990px;top:802.5px;color:#8e8e8e">9</div>
<div class="dash" style="left:1016px;top:808px;width:6px;background:#8e8e8e"></div>
<div class="lbl" style="left:990px;top:820.5px;color:#8e8e8e">12</div>
<div class="dash" style="left:1016px;top:826px;width:6px;background:#8e8e8e"></div>
<div class="lbl" style="left:990px;top:838.5px;color:#8e8e8e">15</div>
<div class="dash" style="left:1016px;top:844px;width:6px;background:#8e8e8e"></div>
<div class="lbl" style="left:990px;top:856.5px;color:#8e8e8e">18</div>
<div class="dash" style="left:1016px;top:862px;width:6px;background:#8e8e8e"></div>
<div class="lbl" style="left:990px;top:874.5px;color:#8e8e8e">21</div>
<div class="dash" style="left:1016px;top:880px;width:6px;background:#8e8e8e"></div>
<div class="lbl" style="left:990px;top:892.5px;color:#8e8e8e">24</div>
<div class="dash" style="left:1016px;top:898px;width:6px;background:#8e8e8e"></div>
<div class="lbl" style="left:990px;top:916.5px;color:#8e8e8e">30</div>
<div class="dash" style="left:1016px;top:922px;width:6px;background:#8e8e8e"></div>
<div class="lbl" style="left:990px;top:936.5px;color:#8e8e8e">35</div>
<div class="dash" style="left:1016px;top:942px;width:6px;background:#8e8e8e"></div>
<div class="lbl" style="left:990px;top:956.5px;color:#8e8e8e">40</div>
<div class="dash" style="left:1016px;top:962px;width:6px;background:#8e8e8e"></div>
<div class="lbl" style="left:990px;top:976.5px;color:#8e8e8e">45</div>
<div class="dash" style="left:1016px;top:982px;width:6px;background:#8e8e8e"></div>
<div class="lbl" style="left:990px;top:996.5px;color:#8e8e8e">50</div>
<div class="dash" style="left:1016px;top:1002px;width:6px;background:#8e8e8e"></div>
<div class="lbl" style="left:990px;top:1016.5px;color:#8e8e8e">60</div>
<div class="dash" style="left:1016px;top:1022px;width:6px;background:#8e8e8e"></div>
<div class="dot" style="left:1020px;top:760px;background:#8e8e8e"></div>
<div class="dot" style="left:1020px;top:766px;background:#8e8e8e"></div>
<div class="dot" style="left:1020px;top:778px;background:#8e8e8e"></div>
<div class="dot" style="left:1020px;top:784px;background:#8e8e8e"></div>
<div class="dot" style="left:1020px;top:796px;background:#8e8e8e"></div>
<div class="dot" style="left:1020px;top:802px;background:#8e8e8e"></div>
<div class="dot" style="left:1020px;top:814px;background:#8e8e8e"></div>
<div class="dot" style="left:1020px;top:820px;background:#8e8e8e"></div>
<div class="dot" style="left:1020px;top:832px;background:#8e8e8e"></div>
<div class="dot" style="left:1020px;top:838px;background:#8e8e8e"></div>
<div class="dot" style="left:1020px;top:850px;background:#8e8e8e"></div>
<div class="dot" style="left:1020px;top:856px;background:#8e8e8e"></div>
<div class="dot" style="left:1020px;top:868px;background:#8e8e8e"></div>
<div class="dot" style="left:1020px;top:874px;background:#8e8e8e"></div>
<div class="dot" style="left:1020px;top:886px;background:#8e8e8e"></div>
<div class="dot" style="left:1020px;top:892px;background:#8e8e8e"></div>
<div class="dot" style="left:1020px;top:902px;background:#8e8e8e"></div>
<div class="dot" style="left:1020px;top:906px;background:#8e8e8e"></div>
<div class="dot" style="left:1020px;top:910px;background:#8e8e8e"></div>
<div class="dot" style="left:1020px;top:914px;background:#8e8e8e"></div>
<div class="dot" style="left:1020px;top:918px;background:#8e8e8e"></div>
<div class="dot" style="left:1020px;top:926px;background:#8e8e8e"></div>
<div class="dot" style="left:1020px;top:930px;background:#8e8e8e"></div>
<div class="dot" style="left:1020px;top:934px;background:#8e8e8e"></div>
<div class="dot" style="left:1020px;top:938px;background:#8e8e8e"></div>
<div class="dot" style="left:1020px;top:946px;background:#8e8e8e"></div>
<div class="dot" style="left:1020px;top:950px;background:#8e8e8e"></div>
<div class="dot" style="left:1020px;top:954px;background:#8e8e8e"></div>
<div class="dot" style="left:1020px;top:958px;background:#8e8e8e"></div>
<div class="dot" style="left:1020px;top:966px;background:#8e8e8e"></div>
<div class="dot" style="left:1020px;top:970px;background:#8e8e8e"></div>
<div class="dot" style="left:1020px;top:974px;background:#8e8e8e"></div>
<div class="dot" style="left:1020px;top:978px;background:#8e8e8e"></div>
<div class="dot" style="left:1020px;top:986px;background:#8e8e8e"></div>
<div class="dot" style="left:1020px;top:990px;background:#8e8e8e"></div>
<div class="dot" style="left:1020px;top:994px;background:#8e8e8e"></div>
<div class="dot" style="left:1020px;top:998px;background:#8e8e8e"></div>
<div class="dot" style="left:1020px;top:1006px;background:#8e8e8e"></div>
<div class="dot" style="left:1020px;top:1010px;background:#8e8e8e"></div>
<div class="dot" style="left:1020px;top:1014px;background:#8e8e8e"></div>
<div class="dot" style="left:1020px;top:1018px;background:#8e8e8e"></div>
<div class="meter" style="left:1022px;top:752px;height:274px">
<div class="bar" style="left:0px;top:24px;height:246px;background-position:0 -24px;background-size:6px 270px"></div>
<div class="a" style="left:0px;top:16px;width:6px;height:2px;background:#e04040"></div>
<div class="bar" style="left:10px;top:32px;height:238px;background-position:0 -32px;background-size:6px 270px"></div>
<div class="a" style="left:10px;top:24px;width:6px;height:2px;background:#f6dc1e"></div>
</div>
<div class="ms" style="left:1002px;top:1036px;width:56px;height:35px;background:linear-gradient(#4a4a4a,#3a3a3a);border-color:#1c1c1c;color:#bdbdbd">Bnc</div>
<div class="ms" style="left:942px;top:1076px;width:56px;height:35px;background:linear-gradient(#4a4a4a,#3a3a3a);border-color:#1c1c1c;color:#bdbdbd">M</div>
<div class="ms" style="left:1002px;top:1076px;width:56px;height:35px;background:linear-gradient(#4a4a4a,#3a3a3a);border-color:#1c1c1c;color:#bdbdbd">S</div>
<div class="dbox" style="left:1078px;top:418px;width:112px;height:36px;border-color:#111;background:linear-gradient(#2a2a2a,#222);box-shadow:inset 0 0 0 1px #333,0 1px 0 rgba(255,255,255,.08)"></div>
<div class="btn btn2" style="left:1076px;top:464px;width:116px;height:35px;color:#dcdcdc">Read</div>
<div class="a" style="left:1107px;top:529px;width:54px;height:25px;background:linear-gradient(#3e5c8c 0,#344f7c 2px,#2e4670 5px,#243a60 6px,#1d2f50 100%);border-radius:2px;box-shadow:0 1px 1px rgba(0,0,0,.35)"></div>
<svg class="a" style="left:1107px;top:529px" width="54" height="25" viewBox="0 0 54 25"><path d="M14,12.8 L20,11 L27,10.2 L34,11 L40,12.8 L34,14.6 L27,15.4 L20,14.6 Z" fill="#4a7ed0"/><rect x="18" y="9.5" width="1.3" height="6.0" fill="#4f86d8" opacity="0.85"/><rect x="19.5" y="8" width="1.3" height="8.5" fill="#4f86d8" opacity="0.85"/><rect x="21" y="6.5" width="1.3" height="11.0" fill="#4f86d8" opacity="0.85"/><rect x="22.5" y="9" width="1.3" height="6.5" fill="#4f86d8" opacity="0.85"/><rect x="24" y="5.5" width="1.3" height="13.0" fill="#4f86d8" opacity="0.85"/><rect x="25.5" y="7" width="1.3" height="10" fill="#4f86d8" opacity="0.85"/><rect x="27" y="3.5" width="1.3" height="17.0" fill="#4f86d8" opacity="0.85"/><rect x="28.5" y="6.5" width="1.3" height="11.0" fill="#4f86d8" opacity="0.85"/><rect x="30" y="4.5" width="1.3" height="13.5" fill="#4f86d8" opacity="0.85"/><rect x="31.5" y="8" width="1.3" height="8.5" fill="#4f86d8" opacity="0.85"/><rect x="33" y="6.5" width="1.3" height="9.0" fill="#4f86d8" opacity="0.85"/><rect x="34.5" y="9" width="1.3" height="6" fill="#4f86d8" opacity="0.85"/><rect x="36" y="6" width="1.3" height="11" fill="#4f86d8" opacity="0.85"/></svg>
<div class="vbox" style="left:1078px;top:674px;width:112px;height:36px;background:#262626;border-color:#151515;box-shadow:inset 0 0 0 1px #333;color:#cfcfcf">0.0</div>
<div class="track" style="left:1130px;top:752px;height:274px;background:#262626"></div>
<div class="tick" style="left:1110px;top:754px;width:20px;background:#8c8c8c"></div>
<div class="tick" style="left:1110px;top:796px;width:20px;background:#8c8c8c"></div>
<div class="tick" style="left:1110px;top:832px;width:20px;background:#f0f0f0"></div>
<div class="tick" style="left:1110px;top:862px;width:20px;background:#8c8c8c"></div>
<div class="tick" style="left:1110px;top:886px;width:20px;background:#8c8c8c"></div>
<div class="tick" style="left:1110px;top:914px;width:20px;background:#8c8c8c"></div>
<div class="tick" style="left:1110px;top:940px;width:20px;background:#8c8c8c"></div>
<div class="tick" style="left:1110px;top:960px;width:20px;background:#8c8c8c"></div>
<div class="tick" style="left:1110px;top:988px;width:20px;background:#8c8c8c"></div>
<div class="tick" style="left:1110px;top:1002px;width:20px;background:#8c8c8c"></div>
<div class="tick" style="left:1110px;top:1022px;width:20px;background:#8c8c8c"></div>
<div class="tick" style="left:1126px;top:768px;width:4px;background:#8c8c8c"></div>
<div class="tick" style="left:1126px;top:782px;width:4px;background:#8c8c8c"></div>
<div class="tick" style="left:1126px;top:870px;width:4px;background:#8c8c8c"></div>
<div class="tick" style="left:1126px;top:878px;width:4px;background:#8c8c8c"></div>
<div class="tick" style="left:1126px;top:894px;width:4px;background:#8c8c8c"></div>
<div class="tick" style="left:1126px;top:902px;width:4px;background:#8c8c8c"></div>
<div class="tick" style="left:1126px;top:908px;width:4px;background:#8c8c8c"></div>
<div class="tick" style="left:1126px;top:920px;width:4px;background:#8c8c8c"></div>
<div class="tick" style="left:1126px;top:926px;width:4px;background:#8c8c8c"></div>
<div class="tick" style="left:1126px;top:932px;width:4px;background:#8c8c8c"></div>
<div class="tick" style="left:1126px;top:936px;width:4px;background:#8c8c8c"></div>
<div class="tick" style="left:1126px;top:946px;width:4px;background:#8c8c8c"></div>
<div class="tick" style="left:1126px;top:950px;width:4px;background:#8c8c8c"></div>
<div class="tick" style="left:1126px;top:954px;width:4px;background:#8c8c8c"></div>
<div class="tick" style="left:1126px;top:968px;width:4px;background:#8c8c8c"></div>
<div class="tick" style="left:1126px;top:974px;width:4px;background:#8c8c8c"></div>
<div class="tick" style="left:1126px;top:978px;width:4px;background:#8c8c8c"></div>
<div class="tick" style="left:1126px;top:984px;width:4px;background:#8c8c8c"></div>
<div class="tick" style="left:1126px;top:996px;width:4px;background:#8c8c8c"></div>
<div class="tick" style="left:1126px;top:1010px;width:4px;background:#8c8c8c"></div>
<div class="tick" style="left:1126px;top:1014px;width:4px;background:#8c8c8c"></div>
<div class="cap" style="left:1115px;top:798px"></div>
<div class="ms" style="left:1076px;top:1076px;width:56px;height:35px;background:linear-gradient(#4a4a4a,#3a3a3a);border-color:#1c1c1c;color:#bdbdbd">M</div>
<div class="ms" style="left:1136px;top:1076px;width:56px;height:35px;background:linear-gradient(#4a4a4a,#3a3a3a);border-color:#1c1c1c;color:#bdbdbd">D</div>
<div class="a" style="left:0;top:1116px;width:932px;height:2px;background:#7e7e7e"></div>
<div class="a" style="left:0;top:1118px;width:1202px;height:2px;background:#262426"></div>
<div class="a" style="left:0;top:1168px;width:1202px;height:3px;background:#252525"></div>
<div class="a" style="left:0;top:1120px;width:932px;height:48px;background:#1b762b;box-shadow:inset 0 2px 0 #2f8a40,inset 0 -2px 0 #358c45"></div>
<div class="a" style="left:934px;top:1120px;width:132px;height:48px;background:#66791d;box-shadow:inset 0 2px 0 #7a8c30,inset 0 -2px 0 #7a8c30"></div>
<div class="a" style="left:1068px;top:1120px;width:132px;height:48px;background:#78196a;box-shadow:inset 0 2px 0 #8c3080,inset 0 -2px 0 #8c3080"></div>
<div class="name" style="left:0px;width:124px">KIK</div>
<div class="name" style="left:134px;width:124px">SNR</div>
<div class="name" style="left:268px;width:124px">SNR 2</div>
<div class="name" style="left:402px;width:124px">HH CL</div>
<div class="name" style="left:536px;width:124px">PERC 1</div>
<div class="name" style="left:670px;width:124px">SHAK</div>
<div class="name" style="left:804px;width:124px">PERC 2L</div>
<div class="name" style="left:938px;width:124px">Stereo Out</div>
<div class="name" style="left:1072px;width:124px">Master</div>
<div class="a" style="left:7px;top:364px;width:221px;height:247px;background:#1c1c1c;border:2px solid #8e8e8e;border-radius:7px;box-shadow:0 2px 6px rgba(0,0,0,.4)"></div>
<div class="a" style="left:9px;top:414px;width:217px;height:1px;background:#3a3a3a"></div>
<div class="a" style="left:9px;top:470px;width:217px;height:1px;background:#3a3a3a"></div>
<div class="a" style="left:9px;top:559px;width:217px;height:1px;background:#3a3a3a"></div>
<div class="a" style="left:9px;top:516px;width:217px;height:32px;background:linear-gradient(#5274ac 0,#3e619c 1.5px,#2c4f8c 50%,#1f4283)"></div>
<div class="a" style="left:226px;top:508px;width:172px;height:368px;background:#1c1c1c;border:2px solid #8e8e8e;border-radius:0 7px 7px 7px;box-shadow:0 2px 6px rgba(0,0,0,.4)"></div>
<div class="a" style="left:228px;top:516px;width:168px;height:32px;background:linear-gradient(#5274ac 0,#3e619c 1.5px,#2c4f8c 50%,#1f4283)"></div>
<div class="a mt" style="left:53px;top:377px;font-size:22px;line-height:24px;color:#cacaca;white-space:nowrap;letter-spacing:0.6px">Stereo Output</div>
<div class="a mt" style="left:53px;top:433px;font-size:22px;line-height:24px;color:#cacaca;white-space:nowrap;letter-spacing:0.6px">No Output</div>
<div class="a mt" style="left:53px;top:489px;font-size:22px;line-height:24px;color:#cacaca;white-space:nowrap;letter-spacing:0.6px">Output</div>
<div class="a mt" style="left:53px;top:521px;font-size:22px;line-height:24px;color:#ffffff;white-space:nowrap;letter-spacing:0.6px">Bus</div>
<div class="a mt" style="left:53px;top:577px;font-size:22px;line-height:24px;color:#cacaca;white-space:nowrap;letter-spacing:0.6px">Binaural</div>
<svg class="a" style="left:20px;top:379px" width="20" height="18" viewBox="0 0 20 18"><path d="M1.5,9.5 L4.5,8 L8,13 C10.5,7.5 14,3 19,0.8 L19.5,1.8 C15,5 11.5,10 9,17.2 L7.2,17.2 Z" fill="#cacaca"/></svg>
<div class="a mt" style="left:21px;top:489px;font-size:22px;line-height:24px;color:#cacaca;white-space:nowrap;letter-spacing:0.6px">-</div>
<svg class="a" style="left:188px;top:493px" width="12" height="17" viewBox="0 0 12 17"><path d="M0,0 L12,8.5 L0,17 Z" fill="#c8c8c8"/></svg>
<svg class="a" style="left:188px;top:524.5px" width="12" height="17" viewBox="0 0 12 17"><path d="M0,0 L12,8.5 L0,17 Z" fill="#e8e8e8"/></svg>
<div class="a mt" style="left:274px;top:520px;font-size:22px;line-height:24px;color:#ffffff;white-space:nowrap;letter-spacing:0.6px">Bus 1</div>
<div class="a mt" style="left:274px;top:552px;font-size:22px;line-height:24px;color:#cacaca;white-space:nowrap;letter-spacing:0.6px">Bus 2</div>
<div class="a mt" style="left:274px;top:584px;font-size:22px;line-height:24px;color:#cacaca;white-space:nowrap;letter-spacing:0.6px">Bus 3</div>
<div class="a mt" style="left:274px;top:616px;font-size:22px;line-height:24px;color:#cacaca;white-space:nowrap;letter-spacing:0.6px">Bus 4</div>
<div class="a mt" style="left:274px;top:648px;font-size:22px;line-height:24px;color:#cacaca;white-space:nowrap;letter-spacing:0.6px">Bus 5</div>
<div class="a mt" style="left:274px;top:680px;font-size:22px;line-height:24px;color:#cacaca;white-space:nowrap;letter-spacing:0.6px">Bus 6</div>
<div class="a mt" style="left:274px;top:712px;font-size:22px;line-height:24px;color:#cacaca;white-space:nowrap;letter-spacing:0.6px">Bus 7</div>
<div class="a mt" style="left:274px;top:744px;font-size:22px;line-height:24px;color:#cacaca;white-space:nowrap;letter-spacing:0.6px">Bus 8</div>
<div class="a mt" style="left:274px;top:776px;font-size:22px;line-height:24px;color:#cacaca;white-space:nowrap;letter-spacing:0.6px">Bus 9</div>
<div class="a mt" style="left:274px;top:808px;font-size:22px;line-height:24px;color:#cacaca;white-space:nowrap;letter-spacing:0.6px">Bus 10</div>
<div class="a" style="left:275.5px;top:856px;width:3.5px;height:4px;background:#cacaca"></div><div class="a" style="left:283px;top:856px;width:3.5px;height:4px;background:#cacaca"></div><div class="a" style="left:290.7px;top:856px;width:3.5px;height:4px;background:#cacaca"></div>
<svg class="a" style="left:358px;top:846px" width="12" height="17" viewBox="0 0 12 17"><path d="M0,0 L12,8.5 L0,17 Z" fill="#c8c8c8"/></svg></body></html>
